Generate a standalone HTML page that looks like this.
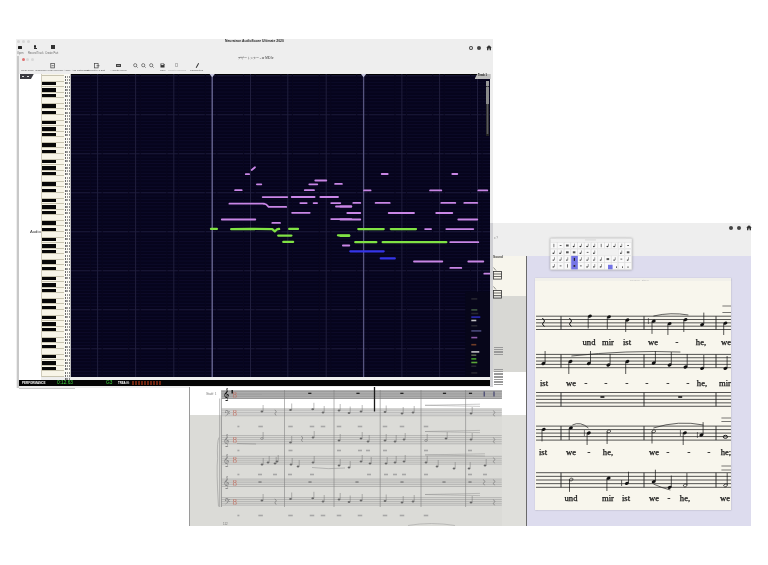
<!DOCTYPE html>
<html><head><meta charset="utf-8"><style>
html,body{margin:0;padding:0;background:#fff;width:768px;height:565px;overflow:hidden;position:relative;font-family:"Liberation Sans",sans-serif}
div,span,svg{position:absolute;box-sizing:border-box}
span{white-space:nowrap;line-height:1;will-change:transform}
</style></head><body>
<div style="left:16px;top:39px;width:476.8px;height:349px;background:#eeeeee;"></div>
<div style="left:17px;top:55.5px;width:1.8px;height:332px;background:#c8c8c8;"></div>
<div style="left:70.7px;top:73.5px;width:419.6px;height:303.3px;background:#06041c;"></div>
<div style="left:70.7px;top:73.5px;width:419.6px;height:1.2px;background:#000000;"></div>
<div style="left:19px;top:73.5px;width:22.2px;height:306px;background:#ffffff;"></div>
<div style="left:20px;top:73.6px;width:14px;height:5.3px;background:#3c3c42;clip-path:polygon(0 0,100% 0,78% 100%,0 100%)"></div>
<div style="left:22.3px;top:75.6px;width:1.6px;height:1.2px;background:#ddd;"></div>
<div style="left:27.3px;top:75.6px;width:1.6px;height:1.2px;background:#ddd;"></div>
<div style="left:41.2px;top:73.5px;width:22.8px;height:303.3px;background:#f8f5e8;"></div>
<div style="left:64px;top:73.5px;width:6.7px;height:303.3px;background:#fbfaf4;"></div>
<svg style="position:absolute;left:70.7px;top:73.5px" width="419.6" height="303.3" viewBox="0 0 419.6 303.3"><rect x="0" y="1.28" width="420" height="1" fill="#1e1c3e"/><rect x="0" y="4.63" width="420" height="0.8" fill="#0e0c2c"/><rect x="0" y="7.88" width="420" height="0.8" fill="#0e0c2c"/><rect x="0" y="11.13" width="420" height="0.8" fill="#0e0c2c"/><rect x="0" y="14.38" width="420" height="0.8" fill="#0e0c2c"/><rect x="0" y="17.63" width="420" height="0.8" fill="#0e0c2c"/><rect x="0" y="20.88" width="420" height="0.8" fill="#0e0c2c"/><rect x="0" y="24.13" width="420" height="0.8" fill="#0e0c2c"/><rect x="0" y="27.38" width="420" height="0.8" fill="#0e0c2c"/><rect x="0" y="30.63" width="420" height="0.8" fill="#0e0c2c"/><rect x="0" y="33.88" width="420" height="0.8" fill="#0e0c2c"/><rect x="0" y="37.13" width="420" height="0.8" fill="#0e0c2c"/><rect x="0" y="40.28" width="420" height="1" fill="#1e1c3e"/><rect x="0" y="43.63" width="420" height="0.8" fill="#0e0c2c"/><rect x="0" y="46.88" width="420" height="0.8" fill="#0e0c2c"/><rect x="0" y="50.13" width="420" height="0.8" fill="#0e0c2c"/><rect x="0" y="53.38" width="420" height="0.8" fill="#0e0c2c"/><rect x="0" y="56.63" width="420" height="0.8" fill="#0e0c2c"/><rect x="0" y="59.88" width="420" height="0.8" fill="#0e0c2c"/><rect x="0" y="63.13" width="420" height="0.8" fill="#0e0c2c"/><rect x="0" y="66.38" width="420" height="0.8" fill="#0e0c2c"/><rect x="0" y="69.62" width="420" height="0.8" fill="#0e0c2c"/><rect x="0" y="72.88" width="420" height="0.8" fill="#0e0c2c"/><rect x="0" y="76.12" width="420" height="0.8" fill="#0e0c2c"/><rect x="0" y="79.28" width="420" height="1" fill="#1e1c3e"/><rect x="0" y="82.62" width="420" height="0.8" fill="#0e0c2c"/><rect x="0" y="85.88" width="420" height="0.8" fill="#0e0c2c"/><rect x="0" y="89.12" width="420" height="0.8" fill="#0e0c2c"/><rect x="0" y="92.38" width="420" height="0.8" fill="#0e0c2c"/><rect x="0" y="95.62" width="420" height="0.8" fill="#0e0c2c"/><rect x="0" y="98.88" width="420" height="0.8" fill="#0e0c2c"/><rect x="0" y="102.12" width="420" height="0.8" fill="#0e0c2c"/><rect x="0" y="105.38" width="420" height="0.8" fill="#0e0c2c"/><rect x="0" y="108.62" width="420" height="0.8" fill="#0e0c2c"/><rect x="0" y="111.88" width="420" height="0.8" fill="#0e0c2c"/><rect x="0" y="115.12" width="420" height="0.8" fill="#0e0c2c"/><rect x="0" y="118.28" width="420" height="1" fill="#1e1c3e"/><rect x="0" y="121.62" width="420" height="0.8" fill="#0e0c2c"/><rect x="0" y="124.88" width="420" height="0.8" fill="#0e0c2c"/><rect x="0" y="128.12" width="420" height="0.8" fill="#0e0c2c"/><rect x="0" y="131.38" width="420" height="0.8" fill="#0e0c2c"/><rect x="0" y="134.62" width="420" height="0.8" fill="#0e0c2c"/><rect x="0" y="137.88" width="420" height="0.8" fill="#0e0c2c"/><rect x="0" y="141.12" width="420" height="0.8" fill="#0e0c2c"/><rect x="0" y="144.38" width="420" height="0.8" fill="#0e0c2c"/><rect x="0" y="147.62" width="420" height="0.8" fill="#0e0c2c"/><rect x="0" y="150.88" width="420" height="0.8" fill="#0e0c2c"/><rect x="0" y="154.12" width="420" height="0.8" fill="#0e0c2c"/><rect x="0" y="157.28" width="420" height="1" fill="#1e1c3e"/><rect x="0" y="160.62" width="420" height="0.8" fill="#0e0c2c"/><rect x="0" y="163.88" width="420" height="0.8" fill="#0e0c2c"/><rect x="0" y="167.12" width="420" height="0.8" fill="#0e0c2c"/><rect x="0" y="170.38" width="420" height="0.8" fill="#0e0c2c"/><rect x="0" y="173.62" width="420" height="0.8" fill="#0e0c2c"/><rect x="0" y="176.88" width="420" height="0.8" fill="#0e0c2c"/><rect x="0" y="180.12" width="420" height="0.8" fill="#0e0c2c"/><rect x="0" y="183.37" width="420" height="0.8" fill="#0e0c2c"/><rect x="0" y="186.62" width="420" height="0.8" fill="#0e0c2c"/><rect x="0" y="189.87" width="420" height="0.8" fill="#0e0c2c"/><rect x="0" y="193.12" width="420" height="0.8" fill="#0e0c2c"/><rect x="0" y="196.27" width="420" height="1" fill="#1e1c3e"/><rect x="0" y="199.62" width="420" height="0.8" fill="#0e0c2c"/><rect x="0" y="202.87" width="420" height="0.8" fill="#0e0c2c"/><rect x="0" y="206.12" width="420" height="0.8" fill="#0e0c2c"/><rect x="0" y="209.37" width="420" height="0.8" fill="#0e0c2c"/><rect x="0" y="212.62" width="420" height="0.8" fill="#0e0c2c"/><rect x="0" y="215.87" width="420" height="0.8" fill="#0e0c2c"/><rect x="0" y="219.12" width="420" height="0.8" fill="#0e0c2c"/><rect x="0" y="222.37" width="420" height="0.8" fill="#0e0c2c"/><rect x="0" y="225.62" width="420" height="0.8" fill="#0e0c2c"/><rect x="0" y="228.87" width="420" height="0.8" fill="#0e0c2c"/><rect x="0" y="232.12" width="420" height="0.8" fill="#0e0c2c"/><rect x="0" y="235.27" width="420" height="1" fill="#1e1c3e"/><rect x="0" y="238.62" width="420" height="0.8" fill="#0e0c2c"/><rect x="0" y="241.87" width="420" height="0.8" fill="#0e0c2c"/><rect x="0" y="245.12" width="420" height="0.8" fill="#0e0c2c"/><rect x="0" y="248.37" width="420" height="0.8" fill="#0e0c2c"/><rect x="0" y="251.62" width="420" height="0.8" fill="#0e0c2c"/><rect x="0" y="254.87" width="420" height="0.8" fill="#0e0c2c"/><rect x="0" y="258.12" width="420" height="0.8" fill="#0e0c2c"/><rect x="0" y="261.38" width="420" height="0.8" fill="#0e0c2c"/><rect x="0" y="264.62" width="420" height="0.8" fill="#0e0c2c"/><rect x="0" y="267.88" width="420" height="0.8" fill="#0e0c2c"/><rect x="0" y="271.12" width="420" height="0.8" fill="#0e0c2c"/><rect x="0" y="274.27" width="420" height="1" fill="#1e1c3e"/><rect x="0" y="277.62" width="420" height="0.8" fill="#0e0c2c"/><rect x="0" y="280.88" width="420" height="0.8" fill="#0e0c2c"/><rect x="0" y="284.12" width="420" height="0.8" fill="#0e0c2c"/><rect x="0" y="287.38" width="420" height="0.8" fill="#0e0c2c"/><rect x="0" y="290.62" width="420" height="0.8" fill="#0e0c2c"/><rect x="0" y="293.88" width="420" height="0.8" fill="#0e0c2c"/><rect x="0" y="297.12" width="420" height="0.8" fill="#0e0c2c"/><rect x="0" y="300.38" width="420" height="0.8" fill="#0e0c2c"/><rect x="26.1" y="0" width="1" height="303.3" fill="#201e3c"/><rect x="64.1" y="0" width="1" height="303.3" fill="#201e3c"/><rect x="102.3" y="0" width="1" height="303.3" fill="#201e3c"/><rect x="140.55" y="0" width="1.3" height="303.3" fill="#6e6c98"/><rect x="179" y="0" width="1" height="303.3" fill="#201e3c"/><rect x="216.3" y="0" width="1" height="303.3" fill="#201e3c"/><rect x="254.7" y="0" width="1" height="303.3" fill="#201e3c"/><rect x="291.95" y="0" width="1.3" height="303.3" fill="#56547e"/><rect x="330.4" y="0" width="1" height="303.3" fill="#201e3c"/><rect x="368.1" y="0" width="1" height="303.3" fill="#201e3c"/><rect x="406" y="0" width="1" height="303.3" fill="#201e3c"/><rect x="30.7" y="0" width="1" height="303.3" fill="#09071f"/><rect x="19.2" y="0" width="1" height="303.3" fill="#09071f"/><rect x="68.7" y="0" width="1" height="303.3" fill="#09071f"/><rect x="57.2" y="0" width="1" height="303.3" fill="#09071f"/><rect x="106.9" y="0" width="1" height="303.3" fill="#09071f"/><rect x="95.4" y="0" width="1" height="303.3" fill="#09071f"/><rect x="145.3" y="0" width="1" height="303.3" fill="#09071f"/><rect x="133.8" y="0" width="1" height="303.3" fill="#09071f"/><rect x="183.6" y="0" width="1" height="303.3" fill="#09071f"/><rect x="172.1" y="0" width="1" height="303.3" fill="#09071f"/><rect x="220.9" y="0" width="1" height="303.3" fill="#09071f"/><rect x="209.4" y="0" width="1" height="303.3" fill="#09071f"/><rect x="259.3" y="0" width="1" height="303.3" fill="#09071f"/><rect x="247.8" y="0" width="1" height="303.3" fill="#09071f"/><rect x="296.7" y="0" width="1" height="303.3" fill="#09071f"/><rect x="285.2" y="0" width="1" height="303.3" fill="#09071f"/><rect x="335" y="0" width="1" height="303.3" fill="#09071f"/><rect x="323.5" y="0" width="1" height="303.3" fill="#09071f"/><rect x="372.7" y="0" width="1" height="303.3" fill="#09071f"/><rect x="361.2" y="0" width="1" height="303.3" fill="#09071f"/><rect x="410.6" y="0" width="1" height="303.3" fill="#09071f"/><rect x="399.1" y="0" width="1" height="303.3" fill="#09071f"/><path d="M174.8,100.2 L178.1,100.2" stroke="#c986e6" stroke-width="1.8" fill="none" stroke-linecap="round" stroke-linejoin="round"/><path d="M164.1,116.2 L170.7,116.2" stroke="#c986e6" stroke-width="1.8" fill="none" stroke-linecap="round" stroke-linejoin="round"/><path d="M185.9,110.3 L190.3,110.3" stroke="#c986e6" stroke-width="1.8" fill="none" stroke-linecap="round" stroke-linejoin="round"/><path d="M158.4,129.7 L192.1,129.7" stroke="#c986e6" stroke-width="1.8" fill="none" stroke-linecap="round" stroke-linejoin="round"/><path d="M191.7,123.1 L216.3,123.1" stroke="#c986e6" stroke-width="1.8" fill="none" stroke-linecap="round" stroke-linejoin="round"/><path d="M220.7,123 L243.6,123" stroke="#c986e6" stroke-width="1.8" fill="none" stroke-linecap="round" stroke-linejoin="round"/><path d="M249.3,123 L267,123" stroke="#c986e6" stroke-width="1.8" fill="none" stroke-linecap="round" stroke-linejoin="round"/><path d="M244.3,106.5 L255.3,106.5" stroke="#c986e6" stroke-width="1.8" fill="none" stroke-linecap="round" stroke-linejoin="round"/><path d="M238.3,110.3 L246.3,110.3" stroke="#c986e6" stroke-width="1.8" fill="none" stroke-linecap="round" stroke-linejoin="round"/><path d="M233.8,116.2 L243,116.2" stroke="#c986e6" stroke-width="1.8" fill="none" stroke-linecap="round" stroke-linejoin="round"/><path d="M229.3,129.1 L235.7,129.1" stroke="#c986e6" stroke-width="1.8" fill="none" stroke-linecap="round" stroke-linejoin="round"/><path d="M242.6,129.1 L246.1,129.1" stroke="#c986e6" stroke-width="1.8" fill="none" stroke-linecap="round" stroke-linejoin="round"/><path d="M264.1,109.9 L270.9,109.9" stroke="#c986e6" stroke-width="1.8" fill="none" stroke-linecap="round" stroke-linejoin="round"/><path d="M260.2,129.1 L269.3,129.1" stroke="#c986e6" stroke-width="1.8" fill="none" stroke-linecap="round" stroke-linejoin="round"/><path d="M265,132.5 L280.3,132.5" stroke="#c986e6" stroke-width="1.8" fill="none" stroke-linecap="round" stroke-linejoin="round"/><path d="M221.1,138.8 L238.7,138.8" stroke="#c986e6" stroke-width="1.8" fill="none" stroke-linecap="round" stroke-linejoin="round"/><path d="M150.8,145.5 L184.3,145.5" stroke="#c986e6" stroke-width="1.8" fill="none" stroke-linecap="round" stroke-linejoin="round"/><path d="M260.2,145.1 L280.3,145.1" stroke="#c986e6" stroke-width="1.8" fill="none" stroke-linecap="round" stroke-linejoin="round"/><path d="M201.3,148.9 L209,148.9" stroke="#c986e6" stroke-width="1.8" fill="none" stroke-linecap="round" stroke-linejoin="round"/><path d="M271.9,171.5 L278.3,171.5" stroke="#c986e6" stroke-width="1.8" fill="none" stroke-linecap="round" stroke-linejoin="round"/><path d="M310.7,100 L316.7,100" stroke="#c986e6" stroke-width="1.8" fill="none" stroke-linecap="round" stroke-linejoin="round"/><path d="M381.3,100 L386.3,100" stroke="#c986e6" stroke-width="1.8" fill="none" stroke-linecap="round" stroke-linejoin="round"/><path d="M293.1,116.4 L299.6,116.4" stroke="#c986e6" stroke-width="1.8" fill="none" stroke-linecap="round" stroke-linejoin="round"/><path d="M359.1,116.4 L370.3,116.4" stroke="#c986e6" stroke-width="1.8" fill="none" stroke-linecap="round" stroke-linejoin="round"/><path d="M407.3,116.4 L416.3,116.4" stroke="#c986e6" stroke-width="1.8" fill="none" stroke-linecap="round" stroke-linejoin="round"/><path d="M282.3,128.9 L289.3,128.9" stroke="#c986e6" stroke-width="1.8" fill="none" stroke-linecap="round" stroke-linejoin="round"/><path d="M304.6,128.9 L318.7,128.9" stroke="#c986e6" stroke-width="1.8" fill="none" stroke-linecap="round" stroke-linejoin="round"/><path d="M370.3,128.9 L384.3,128.9" stroke="#c986e6" stroke-width="1.8" fill="none" stroke-linecap="round" stroke-linejoin="round"/><path d="M393.3,128.9 L406.3,128.9" stroke="#c986e6" stroke-width="1.8" fill="none" stroke-linecap="round" stroke-linejoin="round"/><path d="M269.3,132.5 L280.3,132.5" stroke="#c986e6" stroke-width="1.8" fill="none" stroke-linecap="round" stroke-linejoin="round"/><path d="M276.3,139 L289.3,139" stroke="#c986e6" stroke-width="1.8" fill="none" stroke-linecap="round" stroke-linejoin="round"/><path d="M317.7,139 L343,139" stroke="#c986e6" stroke-width="1.8" fill="none" stroke-linecap="round" stroke-linejoin="round"/><path d="M365.2,139 L381.3,139" stroke="#c986e6" stroke-width="1.8" fill="none" stroke-linecap="round" stroke-linejoin="round"/><path d="M269.3,145.5 L289.3,145.5" stroke="#c986e6" stroke-width="1.8" fill="none" stroke-linecap="round" stroke-linejoin="round"/><path d="M387.3,145.5 L406.3,145.5" stroke="#c986e6" stroke-width="1.8" fill="none" stroke-linecap="round" stroke-linejoin="round"/><path d="M375.3,155.1 L402.3,155.1" stroke="#c986e6" stroke-width="1.8" fill="none" stroke-linecap="round" stroke-linejoin="round"/><path d="M354.1,155.1 L360.1,155.1" stroke="#c986e6" stroke-width="1.8" fill="none" stroke-linecap="round" stroke-linejoin="round"/><path d="M379.3,168.2 L407.3,168.2" stroke="#c986e6" stroke-width="1.8" fill="none" stroke-linecap="round" stroke-linejoin="round"/><path d="M343,187.5 L371.3,187.5" stroke="#c986e6" stroke-width="1.8" fill="none" stroke-linecap="round" stroke-linejoin="round"/><path d="M397.3,187.5 L412.3,187.5" stroke="#c986e6" stroke-width="1.8" fill="none" stroke-linecap="round" stroke-linejoin="round"/><path d="M379.3,193.9 L390.3,193.9" stroke="#c986e6" stroke-width="1.8" fill="none" stroke-linecap="round" stroke-linejoin="round"/><path d="M413.3,199.7 L419.8,199.7" stroke="#c986e6" stroke-width="1.8" fill="none" stroke-linecap="round" stroke-linejoin="round"/><path d="M180.7,96 L184,93.3" stroke="#c986e6" stroke-width="1.8" fill="none" stroke-linecap="round" stroke-linejoin="round"/><path d="M192.8,129.7 L195.3,130.5 L197.6,132.9 L215.2,132.9" stroke="#c986e6" stroke-width="1.8" fill="none" stroke-linecap="round" stroke-linejoin="round"/><path d="M140,154.9 L145.9,154.9" stroke="#80e244" stroke-width="2.3" fill="none" stroke-linecap="round" stroke-linejoin="round"/><path d="M218.2,154.9 L227,154.9" stroke="#80e244" stroke-width="2.3" fill="none" stroke-linecap="round" stroke-linejoin="round"/><path d="M207.2,161.6 L220.4,161.6" stroke="#80e244" stroke-width="2.3" fill="none" stroke-linecap="round" stroke-linejoin="round"/><path d="M212.3,167.9 L222.1,167.9" stroke="#80e244" stroke-width="2.3" fill="none" stroke-linecap="round" stroke-linejoin="round"/><path d="M267,161.3 L278.1,161.3" stroke="#80e244" stroke-width="2.3" fill="none" stroke-linecap="round" stroke-linejoin="round"/><path d="M287.3,155.1 L312.7,155.1" stroke="#80e244" stroke-width="2.3" fill="none" stroke-linecap="round" stroke-linejoin="round"/><path d="M319.8,155.1 L345,155.1" stroke="#80e244" stroke-width="2.3" fill="none" stroke-linecap="round" stroke-linejoin="round"/><path d="M269.3,161.8 L278.3,161.8" stroke="#80e244" stroke-width="2.3" fill="none" stroke-linecap="round" stroke-linejoin="round"/><path d="M284.3,168.2 L305.3,168.2" stroke="#80e244" stroke-width="2.3" fill="none" stroke-linecap="round" stroke-linejoin="round"/><path d="M311.7,168.2 L375.3,168.2" stroke="#80e244" stroke-width="2.3" fill="none" stroke-linecap="round" stroke-linejoin="round"/><path d="M160.2,155.2 L179.3,154.9 L201.3,155.2 L203.8,157.3 L205.8,155.5 L208.1,155" stroke="#80e244" stroke-width="2.3" fill="none" stroke-linecap="round" stroke-linejoin="round"/><path d="M279.3,177.3 L312.7,177.3" stroke="#3535e8" stroke-width="2.2" fill="none" stroke-linecap="round" stroke-linejoin="round"/><path d="M309.7,184.4 L323.8,184.4" stroke="#3535e8" stroke-width="2.2" fill="none" stroke-linecap="round" stroke-linejoin="round"/><rect x="394.3" y="217.5" width="25.5" height="86" fill="#07061a"/><rect x="400.3" y="224.1" width="6" height="1.6" fill="#2e2e36" opacity="0.8"/><rect x="400.3" y="235.1" width="6" height="1.6" fill="#4a6a4a" opacity="0.8"/><rect x="400.3" y="238.7" width="7" height="1.6" fill="#2e2e36" opacity="0.8"/><rect x="400.3" y="242.3" width="9" height="1.6" fill="#3434d8" opacity="0.8"/><rect x="400.3" y="245.7" width="5" height="1.6" fill="#f0f0f0" opacity="0.8"/><rect x="400.3" y="251" width="6" height="1.6" fill="#2e2e36" opacity="0.8"/><rect x="400.3" y="256.1" width="10" height="1.6" fill="#5a5a94" opacity="0.8"/><rect x="400.3" y="262.8" width="6" height="1.6" fill="#b070d0" opacity="0.8"/><rect x="400.3" y="269.9" width="5" height="1.6" fill="#8a4a2a" opacity="0.8"/><rect x="400.3" y="277.1" width="8" height="1.6" fill="#f0f0f0" opacity="0.8"/><rect x="400.3" y="280.4" width="5" height="1.6" fill="#6a7a5a" opacity="0.8"/><rect x="400.3" y="284.1" width="5" height="1.6" fill="#50c030" opacity="0.8"/><rect x="400.3" y="287.7" width="6" height="1.6" fill="#70d040" opacity="0.8"/><rect x="400.3" y="291.4" width="5" height="1.6" fill="#2e2e36" opacity="0.8"/><rect x="400.3" y="298.1" width="6" height="1.6" fill="#2e2e36" opacity="0.8"/><path d="M138.6,0 L143.8,0 L141.2,3.2 Z" fill="#c8c8e0"/><path d="M290,0 L295.2,0 L292.6,3.2 Z" fill="#c8c8e0"/></svg>
<div style="left:41.2px;top:81.45px;width:15px;height:3.9px;background:#080808;"></div>
<div style="left:41.2px;top:87.95px;width:15px;height:3.9px;background:#080808;"></div>
<div style="left:41.2px;top:94.45px;width:15px;height:3.9px;background:#080808;"></div>
<div style="left:41.2px;top:104.2px;width:15px;height:3.9px;background:#080808;"></div>
<div style="left:41.2px;top:110.7px;width:15px;height:3.9px;background:#080808;"></div>
<div style="left:41.2px;top:120.45px;width:15px;height:3.9px;background:#080808;"></div>
<div style="left:41.2px;top:126.95px;width:15px;height:3.9px;background:#080808;"></div>
<div style="left:41.2px;top:133.45px;width:15px;height:3.9px;background:#080808;"></div>
<div style="left:41.2px;top:143.2px;width:15px;height:3.9px;background:#080808;"></div>
<div style="left:41.2px;top:149.7px;width:15px;height:3.9px;background:#080808;"></div>
<div style="left:41.2px;top:159.45px;width:15px;height:3.9px;background:#080808;"></div>
<div style="left:41.2px;top:165.95px;width:15px;height:3.9px;background:#080808;"></div>
<div style="left:41.2px;top:172.45px;width:15px;height:3.9px;background:#080808;"></div>
<div style="left:41.2px;top:182.2px;width:15px;height:3.9px;background:#080808;"></div>
<div style="left:41.2px;top:188.7px;width:15px;height:3.9px;background:#080808;"></div>
<div style="left:41.2px;top:198.45px;width:15px;height:3.9px;background:#080808;"></div>
<div style="left:41.2px;top:204.95px;width:15px;height:3.9px;background:#080808;"></div>
<div style="left:41.2px;top:211.45px;width:15px;height:3.9px;background:#080808;"></div>
<div style="left:41.2px;top:221.2px;width:15px;height:3.9px;background:#080808;"></div>
<div style="left:41.2px;top:227.7px;width:15px;height:3.9px;background:#080808;"></div>
<div style="left:41.2px;top:237.45px;width:15px;height:3.9px;background:#080808;"></div>
<div style="left:41.2px;top:243.95px;width:15px;height:3.9px;background:#080808;"></div>
<div style="left:41.2px;top:250.45px;width:15px;height:3.9px;background:#080808;"></div>
<div style="left:41.2px;top:260.2px;width:15px;height:3.9px;background:#080808;"></div>
<div style="left:41.2px;top:266.7px;width:15px;height:3.9px;background:#080808;"></div>
<div style="left:41.2px;top:276.45px;width:15px;height:3.9px;background:#080808;"></div>
<div style="left:41.2px;top:282.95px;width:15px;height:3.9px;background:#080808;"></div>
<div style="left:41.2px;top:289.45px;width:15px;height:3.9px;background:#080808;"></div>
<div style="left:41.2px;top:299.2px;width:15px;height:3.9px;background:#080808;"></div>
<div style="left:41.2px;top:305.7px;width:15px;height:3.9px;background:#080808;"></div>
<div style="left:41.2px;top:315.45px;width:15px;height:3.9px;background:#080808;"></div>
<div style="left:41.2px;top:321.95px;width:15px;height:3.9px;background:#080808;"></div>
<div style="left:41.2px;top:328.45px;width:15px;height:3.9px;background:#080808;"></div>
<div style="left:41.2px;top:338.2px;width:15px;height:3.9px;background:#080808;"></div>
<div style="left:41.2px;top:344.7px;width:15px;height:3.9px;background:#080808;"></div>
<div style="left:41.2px;top:354.45px;width:15px;height:3.9px;background:#080808;"></div>
<div style="left:41.2px;top:360.95px;width:15px;height:3.9px;background:#080808;"></div>
<div style="left:41.2px;top:367.45px;width:15px;height:3.9px;background:#080808;"></div>
<div style="left:41.2px;top:74.98px;width:22.8px;height:0.6px;background:#c8c4b0;"></div>
<div style="left:41.2px;top:80.55px;width:22.8px;height:0.6px;background:#c8c4b0;"></div>
<div style="left:41.2px;top:86.12px;width:22.8px;height:0.6px;background:#c8c4b0;"></div>
<div style="left:41.2px;top:91.69px;width:22.8px;height:0.6px;background:#c8c4b0;"></div>
<div style="left:41.2px;top:97.26px;width:22.8px;height:0.6px;background:#c8c4b0;"></div>
<div style="left:41.2px;top:102.83px;width:22.8px;height:0.6px;background:#c8c4b0;"></div>
<div style="left:41.2px;top:108.4px;width:22.8px;height:0.6px;background:#c8c4b0;"></div>
<div style="left:41.2px;top:113.98px;width:22.8px;height:0.6px;background:#c8c4b0;"></div>
<div style="left:41.2px;top:119.55px;width:22.8px;height:0.6px;background:#c8c4b0;"></div>
<div style="left:41.2px;top:125.12px;width:22.8px;height:0.6px;background:#c8c4b0;"></div>
<div style="left:41.2px;top:130.69px;width:22.8px;height:0.6px;background:#c8c4b0;"></div>
<div style="left:41.2px;top:136.26px;width:22.8px;height:0.6px;background:#c8c4b0;"></div>
<div style="left:41.2px;top:141.83px;width:22.8px;height:0.6px;background:#c8c4b0;"></div>
<div style="left:41.2px;top:147.4px;width:22.8px;height:0.6px;background:#c8c4b0;"></div>
<div style="left:41.2px;top:152.97px;width:22.8px;height:0.6px;background:#c8c4b0;"></div>
<div style="left:41.2px;top:158.55px;width:22.8px;height:0.6px;background:#c8c4b0;"></div>
<div style="left:41.2px;top:164.12px;width:22.8px;height:0.6px;background:#c8c4b0;"></div>
<div style="left:41.2px;top:169.69px;width:22.8px;height:0.6px;background:#c8c4b0;"></div>
<div style="left:41.2px;top:175.26px;width:22.8px;height:0.6px;background:#c8c4b0;"></div>
<div style="left:41.2px;top:180.83px;width:22.8px;height:0.6px;background:#c8c4b0;"></div>
<div style="left:41.2px;top:186.4px;width:22.8px;height:0.6px;background:#c8c4b0;"></div>
<div style="left:41.2px;top:191.97px;width:22.8px;height:0.6px;background:#c8c4b0;"></div>
<div style="left:41.2px;top:197.55px;width:22.8px;height:0.6px;background:#c8c4b0;"></div>
<div style="left:41.2px;top:203.12px;width:22.8px;height:0.6px;background:#c8c4b0;"></div>
<div style="left:41.2px;top:208.69px;width:22.8px;height:0.6px;background:#c8c4b0;"></div>
<div style="left:41.2px;top:214.26px;width:22.8px;height:0.6px;background:#c8c4b0;"></div>
<div style="left:41.2px;top:219.83px;width:22.8px;height:0.6px;background:#c8c4b0;"></div>
<div style="left:41.2px;top:225.4px;width:22.8px;height:0.6px;background:#c8c4b0;"></div>
<div style="left:41.2px;top:230.97px;width:22.8px;height:0.6px;background:#c8c4b0;"></div>
<div style="left:41.2px;top:236.55px;width:22.8px;height:0.6px;background:#c8c4b0;"></div>
<div style="left:41.2px;top:242.12px;width:22.8px;height:0.6px;background:#c8c4b0;"></div>
<div style="left:41.2px;top:247.69px;width:22.8px;height:0.6px;background:#c8c4b0;"></div>
<div style="left:41.2px;top:253.26px;width:22.8px;height:0.6px;background:#c8c4b0;"></div>
<div style="left:41.2px;top:258.83px;width:22.8px;height:0.6px;background:#c8c4b0;"></div>
<div style="left:41.2px;top:264.4px;width:22.8px;height:0.6px;background:#c8c4b0;"></div>
<div style="left:41.2px;top:269.97px;width:22.8px;height:0.6px;background:#c8c4b0;"></div>
<div style="left:41.2px;top:275.55px;width:22.8px;height:0.6px;background:#c8c4b0;"></div>
<div style="left:41.2px;top:281.12px;width:22.8px;height:0.6px;background:#c8c4b0;"></div>
<div style="left:41.2px;top:286.69px;width:22.8px;height:0.6px;background:#c8c4b0;"></div>
<div style="left:41.2px;top:292.26px;width:22.8px;height:0.6px;background:#c8c4b0;"></div>
<div style="left:41.2px;top:297.83px;width:22.8px;height:0.6px;background:#c8c4b0;"></div>
<div style="left:41.2px;top:303.4px;width:22.8px;height:0.6px;background:#c8c4b0;"></div>
<div style="left:41.2px;top:308.97px;width:22.8px;height:0.6px;background:#c8c4b0;"></div>
<div style="left:41.2px;top:314.55px;width:22.8px;height:0.6px;background:#c8c4b0;"></div>
<div style="left:41.2px;top:320.12px;width:22.8px;height:0.6px;background:#c8c4b0;"></div>
<div style="left:41.2px;top:325.69px;width:22.8px;height:0.6px;background:#c8c4b0;"></div>
<div style="left:41.2px;top:331.26px;width:22.8px;height:0.6px;background:#c8c4b0;"></div>
<div style="left:41.2px;top:336.83px;width:22.8px;height:0.6px;background:#c8c4b0;"></div>
<div style="left:41.2px;top:342.4px;width:22.8px;height:0.6px;background:#c8c4b0;"></div>
<div style="left:41.2px;top:347.97px;width:22.8px;height:0.6px;background:#c8c4b0;"></div>
<div style="left:41.2px;top:353.55px;width:22.8px;height:0.6px;background:#c8c4b0;"></div>
<div style="left:41.2px;top:359.12px;width:22.8px;height:0.6px;background:#c8c4b0;"></div>
<div style="left:41.2px;top:364.69px;width:22.8px;height:0.6px;background:#c8c4b0;"></div>
<div style="left:41.2px;top:370.26px;width:22.8px;height:0.6px;background:#c8c4b0;"></div>
<div style="left:41.2px;top:375.83px;width:22.8px;height:0.6px;background:#c8c4b0;"></div>
<div style="left:41.2px;top:73.5px;width:0.6px;height:303.3px;background:#d0ccbc;"></div>
<div style="left:64.5px;top:75.9px;width:1.8px;height:2px;background:#6a6a6a;"></div>
<div style="left:66.6px;top:75.9px;width:1.2px;height:2px;background:#9a9a9a;"></div>
<div style="left:68.6px;top:75.9px;width:1.4px;height:2px;background:#8a8a8a;"></div>
<div style="left:64.5px;top:79.15px;width:1.8px;height:2px;background:#6a6a6a;"></div>
<div style="left:66.6px;top:79.15px;width:1.2px;height:2px;background:#9a9a9a;"></div>
<div style="left:68.6px;top:79.15px;width:1.4px;height:2px;background:#8a8a8a;"></div>
<div style="left:64.5px;top:82.4px;width:1.8px;height:2px;background:#6a6a6a;"></div>
<div style="left:66.3px;top:82.4px;width:1.9px;height:2px;background:#9a9a9a;"></div>
<div style="left:68.6px;top:82.4px;width:1.4px;height:2px;background:#8a8a8a;"></div>
<div style="left:64.5px;top:85.65px;width:1.8px;height:2px;background:#6a6a6a;"></div>
<div style="left:66.6px;top:85.65px;width:1.2px;height:2px;background:#9a9a9a;"></div>
<div style="left:68.6px;top:85.65px;width:1.4px;height:2px;background:#8a8a8a;"></div>
<div style="left:64.5px;top:88.9px;width:1.8px;height:2px;background:#6a6a6a;"></div>
<div style="left:66.3px;top:88.9px;width:1.9px;height:2px;background:#9a9a9a;"></div>
<div style="left:68.6px;top:88.9px;width:1.4px;height:2px;background:#8a8a8a;"></div>
<div style="left:64.5px;top:92.15px;width:1.8px;height:2px;background:#6a6a6a;"></div>
<div style="left:66.6px;top:92.15px;width:1.2px;height:2px;background:#9a9a9a;"></div>
<div style="left:68.6px;top:92.15px;width:1.4px;height:2px;background:#8a8a8a;"></div>
<div style="left:64.5px;top:95.4px;width:1.8px;height:2px;background:#6a6a6a;"></div>
<div style="left:66.3px;top:95.4px;width:1.9px;height:2px;background:#9a9a9a;"></div>
<div style="left:68.6px;top:95.4px;width:1.4px;height:2px;background:#8a8a8a;"></div>
<div style="left:64.5px;top:98.65px;width:1.8px;height:2px;background:#6a6a6a;"></div>
<div style="left:66.6px;top:98.65px;width:1.2px;height:2px;background:#9a9a9a;"></div>
<div style="left:68.6px;top:98.65px;width:1.4px;height:2px;background:#8a8a8a;"></div>
<div style="left:64.5px;top:101.9px;width:1.8px;height:2px;background:#6a6a6a;"></div>
<div style="left:66.6px;top:101.9px;width:1.2px;height:2px;background:#9a9a9a;"></div>
<div style="left:68.6px;top:101.9px;width:1.4px;height:2px;background:#8a8a8a;"></div>
<div style="left:64.5px;top:105.15px;width:1.8px;height:2px;background:#6a6a6a;"></div>
<div style="left:66.3px;top:105.15px;width:1.9px;height:2px;background:#9a9a9a;"></div>
<div style="left:68.6px;top:105.15px;width:1.4px;height:2px;background:#8a8a8a;"></div>
<div style="left:64.5px;top:108.4px;width:1.8px;height:2px;background:#6a6a6a;"></div>
<div style="left:66.6px;top:108.4px;width:1.2px;height:2px;background:#9a9a9a;"></div>
<div style="left:68.6px;top:108.4px;width:1.4px;height:2px;background:#8a8a8a;"></div>
<div style="left:64.5px;top:111.65px;width:1.8px;height:2px;background:#6a6a6a;"></div>
<div style="left:66.3px;top:111.65px;width:1.9px;height:2px;background:#9a9a9a;"></div>
<div style="left:68.6px;top:111.65px;width:1.4px;height:2px;background:#8a8a8a;"></div>
<div style="left:64.5px;top:114.9px;width:1.8px;height:2px;background:#6a6a6a;"></div>
<div style="left:66.6px;top:114.9px;width:1.2px;height:2px;background:#9a9a9a;"></div>
<div style="left:68.6px;top:114.9px;width:1.4px;height:2px;background:#8a8a8a;"></div>
<div style="left:64.5px;top:118.15px;width:1.8px;height:2px;background:#6a6a6a;"></div>
<div style="left:66.6px;top:118.15px;width:1.2px;height:2px;background:#9a9a9a;"></div>
<div style="left:68.6px;top:118.15px;width:1.4px;height:2px;background:#8a8a8a;"></div>
<div style="left:64.5px;top:121.4px;width:1.8px;height:2px;background:#6a6a6a;"></div>
<div style="left:66.3px;top:121.4px;width:1.9px;height:2px;background:#9a9a9a;"></div>
<div style="left:68.6px;top:121.4px;width:1.4px;height:2px;background:#8a8a8a;"></div>
<div style="left:64.5px;top:124.65px;width:1.8px;height:2px;background:#6a6a6a;"></div>
<div style="left:66.6px;top:124.65px;width:1.2px;height:2px;background:#9a9a9a;"></div>
<div style="left:68.6px;top:124.65px;width:1.4px;height:2px;background:#8a8a8a;"></div>
<div style="left:64.5px;top:127.9px;width:1.8px;height:2px;background:#6a6a6a;"></div>
<div style="left:66.3px;top:127.9px;width:1.9px;height:2px;background:#9a9a9a;"></div>
<div style="left:68.6px;top:127.9px;width:1.4px;height:2px;background:#8a8a8a;"></div>
<div style="left:64.5px;top:131.15px;width:1.8px;height:2px;background:#6a6a6a;"></div>
<div style="left:66.6px;top:131.15px;width:1.2px;height:2px;background:#9a9a9a;"></div>
<div style="left:68.6px;top:131.15px;width:1.4px;height:2px;background:#8a8a8a;"></div>
<div style="left:64.5px;top:134.4px;width:1.8px;height:2px;background:#6a6a6a;"></div>
<div style="left:66.3px;top:134.4px;width:1.9px;height:2px;background:#9a9a9a;"></div>
<div style="left:68.6px;top:134.4px;width:1.4px;height:2px;background:#8a8a8a;"></div>
<div style="left:64.5px;top:137.65px;width:1.8px;height:2px;background:#6a6a6a;"></div>
<div style="left:66.6px;top:137.65px;width:1.2px;height:2px;background:#9a9a9a;"></div>
<div style="left:68.6px;top:137.65px;width:1.4px;height:2px;background:#8a8a8a;"></div>
<div style="left:64.5px;top:140.9px;width:1.8px;height:2px;background:#6a6a6a;"></div>
<div style="left:66.6px;top:140.9px;width:1.2px;height:2px;background:#9a9a9a;"></div>
<div style="left:68.6px;top:140.9px;width:1.4px;height:2px;background:#8a8a8a;"></div>
<div style="left:64.5px;top:144.15px;width:1.8px;height:2px;background:#6a6a6a;"></div>
<div style="left:66.3px;top:144.15px;width:1.9px;height:2px;background:#9a9a9a;"></div>
<div style="left:68.6px;top:144.15px;width:1.4px;height:2px;background:#8a8a8a;"></div>
<div style="left:64.5px;top:147.4px;width:1.8px;height:2px;background:#6a6a6a;"></div>
<div style="left:66.6px;top:147.4px;width:1.2px;height:2px;background:#9a9a9a;"></div>
<div style="left:68.6px;top:147.4px;width:1.4px;height:2px;background:#8a8a8a;"></div>
<div style="left:64.5px;top:150.65px;width:1.8px;height:2px;background:#6a6a6a;"></div>
<div style="left:66.3px;top:150.65px;width:1.9px;height:2px;background:#9a9a9a;"></div>
<div style="left:68.6px;top:150.65px;width:1.4px;height:2px;background:#8a8a8a;"></div>
<div style="left:64.5px;top:153.9px;width:1.8px;height:2px;background:#6a6a6a;"></div>
<div style="left:66.6px;top:153.9px;width:1.2px;height:2px;background:#9a9a9a;"></div>
<div style="left:68.6px;top:153.9px;width:1.4px;height:2px;background:#8a8a8a;"></div>
<div style="left:64.5px;top:157.15px;width:1.8px;height:2px;background:#6a6a6a;"></div>
<div style="left:66.6px;top:157.15px;width:1.2px;height:2px;background:#9a9a9a;"></div>
<div style="left:68.6px;top:157.15px;width:1.4px;height:2px;background:#8a8a8a;"></div>
<div style="left:64.5px;top:160.4px;width:1.8px;height:2px;background:#6a6a6a;"></div>
<div style="left:66.3px;top:160.4px;width:1.9px;height:2px;background:#9a9a9a;"></div>
<div style="left:68.6px;top:160.4px;width:1.4px;height:2px;background:#8a8a8a;"></div>
<div style="left:64.5px;top:163.65px;width:1.8px;height:2px;background:#6a6a6a;"></div>
<div style="left:66.6px;top:163.65px;width:1.2px;height:2px;background:#9a9a9a;"></div>
<div style="left:68.6px;top:163.65px;width:1.4px;height:2px;background:#8a8a8a;"></div>
<div style="left:64.5px;top:166.9px;width:1.8px;height:2px;background:#6a6a6a;"></div>
<div style="left:66.3px;top:166.9px;width:1.9px;height:2px;background:#9a9a9a;"></div>
<div style="left:68.6px;top:166.9px;width:1.4px;height:2px;background:#8a8a8a;"></div>
<div style="left:64.5px;top:170.15px;width:1.8px;height:2px;background:#6a6a6a;"></div>
<div style="left:66.6px;top:170.15px;width:1.2px;height:2px;background:#9a9a9a;"></div>
<div style="left:68.6px;top:170.15px;width:1.4px;height:2px;background:#8a8a8a;"></div>
<div style="left:64.5px;top:173.4px;width:1.8px;height:2px;background:#6a6a6a;"></div>
<div style="left:66.3px;top:173.4px;width:1.9px;height:2px;background:#9a9a9a;"></div>
<div style="left:68.6px;top:173.4px;width:1.4px;height:2px;background:#8a8a8a;"></div>
<div style="left:64.5px;top:176.65px;width:1.8px;height:2px;background:#6a6a6a;"></div>
<div style="left:66.6px;top:176.65px;width:1.2px;height:2px;background:#9a9a9a;"></div>
<div style="left:68.6px;top:176.65px;width:1.4px;height:2px;background:#8a8a8a;"></div>
<div style="left:64.5px;top:179.9px;width:1.8px;height:2px;background:#6a6a6a;"></div>
<div style="left:66.6px;top:179.9px;width:1.2px;height:2px;background:#9a9a9a;"></div>
<div style="left:68.6px;top:179.9px;width:1.4px;height:2px;background:#8a8a8a;"></div>
<div style="left:64.5px;top:183.15px;width:1.8px;height:2px;background:#6a6a6a;"></div>
<div style="left:66.3px;top:183.15px;width:1.9px;height:2px;background:#9a9a9a;"></div>
<div style="left:68.6px;top:183.15px;width:1.4px;height:2px;background:#8a8a8a;"></div>
<div style="left:64.5px;top:186.4px;width:1.8px;height:2px;background:#6a6a6a;"></div>
<div style="left:66.6px;top:186.4px;width:1.2px;height:2px;background:#9a9a9a;"></div>
<div style="left:68.6px;top:186.4px;width:1.4px;height:2px;background:#8a8a8a;"></div>
<div style="left:64.5px;top:189.65px;width:1.8px;height:2px;background:#6a6a6a;"></div>
<div style="left:66.3px;top:189.65px;width:1.9px;height:2px;background:#9a9a9a;"></div>
<div style="left:68.6px;top:189.65px;width:1.4px;height:2px;background:#8a8a8a;"></div>
<div style="left:64.5px;top:192.9px;width:1.8px;height:2px;background:#6a6a6a;"></div>
<div style="left:66.6px;top:192.9px;width:1.2px;height:2px;background:#9a9a9a;"></div>
<div style="left:68.6px;top:192.9px;width:1.4px;height:2px;background:#8a8a8a;"></div>
<div style="left:64.5px;top:196.15px;width:1.8px;height:2px;background:#6a6a6a;"></div>
<div style="left:66.6px;top:196.15px;width:1.2px;height:2px;background:#9a9a9a;"></div>
<div style="left:68.6px;top:196.15px;width:1.4px;height:2px;background:#8a8a8a;"></div>
<div style="left:64.5px;top:199.4px;width:1.8px;height:2px;background:#6a6a6a;"></div>
<div style="left:66.3px;top:199.4px;width:1.9px;height:2px;background:#9a9a9a;"></div>
<div style="left:68.6px;top:199.4px;width:1.4px;height:2px;background:#8a8a8a;"></div>
<div style="left:64.5px;top:202.65px;width:1.8px;height:2px;background:#6a6a6a;"></div>
<div style="left:66.6px;top:202.65px;width:1.2px;height:2px;background:#9a9a9a;"></div>
<div style="left:68.6px;top:202.65px;width:1.4px;height:2px;background:#8a8a8a;"></div>
<div style="left:64.5px;top:205.9px;width:1.8px;height:2px;background:#6a6a6a;"></div>
<div style="left:66.3px;top:205.9px;width:1.9px;height:2px;background:#9a9a9a;"></div>
<div style="left:68.6px;top:205.9px;width:1.4px;height:2px;background:#8a8a8a;"></div>
<div style="left:64.5px;top:209.15px;width:1.8px;height:2px;background:#6a6a6a;"></div>
<div style="left:66.6px;top:209.15px;width:1.2px;height:2px;background:#9a9a9a;"></div>
<div style="left:68.6px;top:209.15px;width:1.4px;height:2px;background:#8a8a8a;"></div>
<div style="left:64.5px;top:212.4px;width:1.8px;height:2px;background:#6a6a6a;"></div>
<div style="left:66.3px;top:212.4px;width:1.9px;height:2px;background:#9a9a9a;"></div>
<div style="left:68.6px;top:212.4px;width:1.4px;height:2px;background:#8a8a8a;"></div>
<div style="left:64.5px;top:215.65px;width:1.8px;height:2px;background:#6a6a6a;"></div>
<div style="left:66.6px;top:215.65px;width:1.2px;height:2px;background:#9a9a9a;"></div>
<div style="left:68.6px;top:215.65px;width:1.4px;height:2px;background:#8a8a8a;"></div>
<div style="left:64.5px;top:218.9px;width:1.8px;height:2px;background:#6a6a6a;"></div>
<div style="left:66.6px;top:218.9px;width:1.2px;height:2px;background:#9a9a9a;"></div>
<div style="left:68.6px;top:218.9px;width:1.4px;height:2px;background:#8a8a8a;"></div>
<div style="left:64.5px;top:222.15px;width:1.8px;height:2px;background:#6a6a6a;"></div>
<div style="left:66.3px;top:222.15px;width:1.9px;height:2px;background:#9a9a9a;"></div>
<div style="left:68.6px;top:222.15px;width:1.4px;height:2px;background:#8a8a8a;"></div>
<div style="left:64.5px;top:225.4px;width:1.8px;height:2px;background:#6a6a6a;"></div>
<div style="left:66.6px;top:225.4px;width:1.2px;height:2px;background:#9a9a9a;"></div>
<div style="left:68.6px;top:225.4px;width:1.4px;height:2px;background:#8a8a8a;"></div>
<div style="left:64.5px;top:228.65px;width:1.8px;height:2px;background:#6a6a6a;"></div>
<div style="left:66.3px;top:228.65px;width:1.9px;height:2px;background:#9a9a9a;"></div>
<div style="left:68.6px;top:228.65px;width:1.4px;height:2px;background:#8a8a8a;"></div>
<div style="left:64.5px;top:231.9px;width:1.8px;height:2px;background:#6a6a6a;"></div>
<div style="left:66.6px;top:231.9px;width:1.2px;height:2px;background:#9a9a9a;"></div>
<div style="left:68.6px;top:231.9px;width:1.4px;height:2px;background:#8a8a8a;"></div>
<div style="left:64.5px;top:235.15px;width:1.8px;height:2px;background:#6a6a6a;"></div>
<div style="left:66.6px;top:235.15px;width:1.2px;height:2px;background:#9a9a9a;"></div>
<div style="left:68.6px;top:235.15px;width:1.4px;height:2px;background:#8a8a8a;"></div>
<div style="left:64.5px;top:238.4px;width:1.8px;height:2px;background:#6a6a6a;"></div>
<div style="left:66.3px;top:238.4px;width:1.9px;height:2px;background:#9a9a9a;"></div>
<div style="left:68.6px;top:238.4px;width:1.4px;height:2px;background:#8a8a8a;"></div>
<div style="left:64.5px;top:241.65px;width:1.8px;height:2px;background:#6a6a6a;"></div>
<div style="left:66.6px;top:241.65px;width:1.2px;height:2px;background:#9a9a9a;"></div>
<div style="left:68.6px;top:241.65px;width:1.4px;height:2px;background:#8a8a8a;"></div>
<div style="left:64.5px;top:244.9px;width:1.8px;height:2px;background:#6a6a6a;"></div>
<div style="left:66.3px;top:244.9px;width:1.9px;height:2px;background:#9a9a9a;"></div>
<div style="left:68.6px;top:244.9px;width:1.4px;height:2px;background:#8a8a8a;"></div>
<div style="left:64.5px;top:248.15px;width:1.8px;height:2px;background:#6a6a6a;"></div>
<div style="left:66.6px;top:248.15px;width:1.2px;height:2px;background:#9a9a9a;"></div>
<div style="left:68.6px;top:248.15px;width:1.4px;height:2px;background:#8a8a8a;"></div>
<div style="left:64.5px;top:251.4px;width:1.8px;height:2px;background:#6a6a6a;"></div>
<div style="left:66.3px;top:251.4px;width:1.9px;height:2px;background:#9a9a9a;"></div>
<div style="left:68.6px;top:251.4px;width:1.4px;height:2px;background:#8a8a8a;"></div>
<div style="left:64.5px;top:254.65px;width:1.8px;height:2px;background:#6a6a6a;"></div>
<div style="left:66.6px;top:254.65px;width:1.2px;height:2px;background:#9a9a9a;"></div>
<div style="left:68.6px;top:254.65px;width:1.4px;height:2px;background:#8a8a8a;"></div>
<div style="left:64.5px;top:257.9px;width:1.8px;height:2px;background:#6a6a6a;"></div>
<div style="left:66.6px;top:257.9px;width:1.2px;height:2px;background:#9a9a9a;"></div>
<div style="left:68.6px;top:257.9px;width:1.4px;height:2px;background:#8a8a8a;"></div>
<div style="left:64.5px;top:261.15px;width:1.8px;height:2px;background:#6a6a6a;"></div>
<div style="left:66.3px;top:261.15px;width:1.9px;height:2px;background:#9a9a9a;"></div>
<div style="left:68.6px;top:261.15px;width:1.4px;height:2px;background:#8a8a8a;"></div>
<div style="left:64.5px;top:264.4px;width:1.8px;height:2px;background:#6a6a6a;"></div>
<div style="left:66.6px;top:264.4px;width:1.2px;height:2px;background:#9a9a9a;"></div>
<div style="left:68.6px;top:264.4px;width:1.4px;height:2px;background:#8a8a8a;"></div>
<div style="left:64.5px;top:267.65px;width:1.8px;height:2px;background:#6a6a6a;"></div>
<div style="left:66.3px;top:267.65px;width:1.9px;height:2px;background:#9a9a9a;"></div>
<div style="left:68.6px;top:267.65px;width:1.4px;height:2px;background:#8a8a8a;"></div>
<div style="left:64.5px;top:270.9px;width:1.8px;height:2px;background:#6a6a6a;"></div>
<div style="left:66.6px;top:270.9px;width:1.2px;height:2px;background:#9a9a9a;"></div>
<div style="left:68.6px;top:270.9px;width:1.4px;height:2px;background:#8a8a8a;"></div>
<div style="left:64.5px;top:274.15px;width:1.8px;height:2px;background:#6a6a6a;"></div>
<div style="left:66.6px;top:274.15px;width:1.2px;height:2px;background:#9a9a9a;"></div>
<div style="left:68.6px;top:274.15px;width:1.4px;height:2px;background:#8a8a8a;"></div>
<div style="left:64.5px;top:277.4px;width:1.8px;height:2px;background:#6a6a6a;"></div>
<div style="left:66.3px;top:277.4px;width:1.9px;height:2px;background:#9a9a9a;"></div>
<div style="left:68.6px;top:277.4px;width:1.4px;height:2px;background:#8a8a8a;"></div>
<div style="left:64.5px;top:280.65px;width:1.8px;height:2px;background:#6a6a6a;"></div>
<div style="left:66.6px;top:280.65px;width:1.2px;height:2px;background:#9a9a9a;"></div>
<div style="left:68.6px;top:280.65px;width:1.4px;height:2px;background:#8a8a8a;"></div>
<div style="left:64.5px;top:283.9px;width:1.8px;height:2px;background:#6a6a6a;"></div>
<div style="left:66.3px;top:283.9px;width:1.9px;height:2px;background:#9a9a9a;"></div>
<div style="left:68.6px;top:283.9px;width:1.4px;height:2px;background:#8a8a8a;"></div>
<div style="left:64.5px;top:287.15px;width:1.8px;height:2px;background:#6a6a6a;"></div>
<div style="left:66.6px;top:287.15px;width:1.2px;height:2px;background:#9a9a9a;"></div>
<div style="left:68.6px;top:287.15px;width:1.4px;height:2px;background:#8a8a8a;"></div>
<div style="left:64.5px;top:290.4px;width:1.8px;height:2px;background:#6a6a6a;"></div>
<div style="left:66.3px;top:290.4px;width:1.9px;height:2px;background:#9a9a9a;"></div>
<div style="left:68.6px;top:290.4px;width:1.4px;height:2px;background:#8a8a8a;"></div>
<div style="left:64.5px;top:293.65px;width:1.8px;height:2px;background:#6a6a6a;"></div>
<div style="left:66.6px;top:293.65px;width:1.2px;height:2px;background:#9a9a9a;"></div>
<div style="left:68.6px;top:293.65px;width:1.4px;height:2px;background:#8a8a8a;"></div>
<div style="left:64.5px;top:296.9px;width:1.8px;height:2px;background:#6a6a6a;"></div>
<div style="left:66.6px;top:296.9px;width:1.2px;height:2px;background:#9a9a9a;"></div>
<div style="left:68.6px;top:296.9px;width:1.4px;height:2px;background:#8a8a8a;"></div>
<div style="left:64.5px;top:300.15px;width:1.8px;height:2px;background:#6a6a6a;"></div>
<div style="left:66.3px;top:300.15px;width:1.9px;height:2px;background:#9a9a9a;"></div>
<div style="left:68.6px;top:300.15px;width:1.4px;height:2px;background:#8a8a8a;"></div>
<div style="left:64.5px;top:303.4px;width:1.8px;height:2px;background:#6a6a6a;"></div>
<div style="left:66.6px;top:303.4px;width:1.2px;height:2px;background:#9a9a9a;"></div>
<div style="left:68.6px;top:303.4px;width:1.4px;height:2px;background:#8a8a8a;"></div>
<div style="left:64.5px;top:306.65px;width:1.8px;height:2px;background:#6a6a6a;"></div>
<div style="left:66.3px;top:306.65px;width:1.9px;height:2px;background:#9a9a9a;"></div>
<div style="left:68.6px;top:306.65px;width:1.4px;height:2px;background:#8a8a8a;"></div>
<div style="left:64.5px;top:309.9px;width:1.8px;height:2px;background:#6a6a6a;"></div>
<div style="left:66.6px;top:309.9px;width:1.2px;height:2px;background:#9a9a9a;"></div>
<div style="left:68.6px;top:309.9px;width:1.4px;height:2px;background:#8a8a8a;"></div>
<div style="left:64.5px;top:313.15px;width:1.8px;height:2px;background:#6a6a6a;"></div>
<div style="left:66.6px;top:313.15px;width:1.2px;height:2px;background:#9a9a9a;"></div>
<div style="left:68.6px;top:313.15px;width:1.4px;height:2px;background:#8a8a8a;"></div>
<div style="left:64.5px;top:316.4px;width:1.8px;height:2px;background:#6a6a6a;"></div>
<div style="left:66.3px;top:316.4px;width:1.9px;height:2px;background:#9a9a9a;"></div>
<div style="left:68.6px;top:316.4px;width:1.4px;height:2px;background:#8a8a8a;"></div>
<div style="left:64.5px;top:319.65px;width:1.8px;height:2px;background:#6a6a6a;"></div>
<div style="left:66.6px;top:319.65px;width:1.2px;height:2px;background:#9a9a9a;"></div>
<div style="left:68.6px;top:319.65px;width:1.4px;height:2px;background:#8a8a8a;"></div>
<div style="left:64.5px;top:322.9px;width:1.8px;height:2px;background:#6a6a6a;"></div>
<div style="left:66.3px;top:322.9px;width:1.9px;height:2px;background:#9a9a9a;"></div>
<div style="left:68.6px;top:322.9px;width:1.4px;height:2px;background:#8a8a8a;"></div>
<div style="left:64.5px;top:326.15px;width:1.8px;height:2px;background:#6a6a6a;"></div>
<div style="left:66.6px;top:326.15px;width:1.2px;height:2px;background:#9a9a9a;"></div>
<div style="left:68.6px;top:326.15px;width:1.4px;height:2px;background:#8a8a8a;"></div>
<div style="left:64.5px;top:329.4px;width:1.8px;height:2px;background:#6a6a6a;"></div>
<div style="left:66.3px;top:329.4px;width:1.9px;height:2px;background:#9a9a9a;"></div>
<div style="left:68.6px;top:329.4px;width:1.4px;height:2px;background:#8a8a8a;"></div>
<div style="left:64.5px;top:332.65px;width:1.8px;height:2px;background:#6a6a6a;"></div>
<div style="left:66.6px;top:332.65px;width:1.2px;height:2px;background:#9a9a9a;"></div>
<div style="left:68.6px;top:332.65px;width:1.4px;height:2px;background:#8a8a8a;"></div>
<div style="left:64.5px;top:335.9px;width:1.8px;height:2px;background:#6a6a6a;"></div>
<div style="left:66.6px;top:335.9px;width:1.2px;height:2px;background:#9a9a9a;"></div>
<div style="left:68.6px;top:335.9px;width:1.4px;height:2px;background:#8a8a8a;"></div>
<div style="left:64.5px;top:339.15px;width:1.8px;height:2px;background:#6a6a6a;"></div>
<div style="left:66.3px;top:339.15px;width:1.9px;height:2px;background:#9a9a9a;"></div>
<div style="left:68.6px;top:339.15px;width:1.4px;height:2px;background:#8a8a8a;"></div>
<div style="left:64.5px;top:342.4px;width:1.8px;height:2px;background:#6a6a6a;"></div>
<div style="left:66.6px;top:342.4px;width:1.2px;height:2px;background:#9a9a9a;"></div>
<div style="left:68.6px;top:342.4px;width:1.4px;height:2px;background:#8a8a8a;"></div>
<div style="left:64.5px;top:345.65px;width:1.8px;height:2px;background:#6a6a6a;"></div>
<div style="left:66.3px;top:345.65px;width:1.9px;height:2px;background:#9a9a9a;"></div>
<div style="left:68.6px;top:345.65px;width:1.4px;height:2px;background:#8a8a8a;"></div>
<div style="left:64.5px;top:348.9px;width:1.8px;height:2px;background:#6a6a6a;"></div>
<div style="left:66.6px;top:348.9px;width:1.2px;height:2px;background:#9a9a9a;"></div>
<div style="left:68.6px;top:348.9px;width:1.4px;height:2px;background:#8a8a8a;"></div>
<div style="left:64.5px;top:352.15px;width:1.8px;height:2px;background:#6a6a6a;"></div>
<div style="left:66.6px;top:352.15px;width:1.2px;height:2px;background:#9a9a9a;"></div>
<div style="left:68.6px;top:352.15px;width:1.4px;height:2px;background:#8a8a8a;"></div>
<div style="left:64.5px;top:355.4px;width:1.8px;height:2px;background:#6a6a6a;"></div>
<div style="left:66.3px;top:355.4px;width:1.9px;height:2px;background:#9a9a9a;"></div>
<div style="left:68.6px;top:355.4px;width:1.4px;height:2px;background:#8a8a8a;"></div>
<div style="left:64.5px;top:358.65px;width:1.8px;height:2px;background:#6a6a6a;"></div>
<div style="left:66.6px;top:358.65px;width:1.2px;height:2px;background:#9a9a9a;"></div>
<div style="left:68.6px;top:358.65px;width:1.4px;height:2px;background:#8a8a8a;"></div>
<div style="left:64.5px;top:361.9px;width:1.8px;height:2px;background:#6a6a6a;"></div>
<div style="left:66.3px;top:361.9px;width:1.9px;height:2px;background:#9a9a9a;"></div>
<div style="left:68.6px;top:361.9px;width:1.4px;height:2px;background:#8a8a8a;"></div>
<div style="left:64.5px;top:365.15px;width:1.8px;height:2px;background:#6a6a6a;"></div>
<div style="left:66.6px;top:365.15px;width:1.2px;height:2px;background:#9a9a9a;"></div>
<div style="left:68.6px;top:365.15px;width:1.4px;height:2px;background:#8a8a8a;"></div>
<div style="left:64.5px;top:368.4px;width:1.8px;height:2px;background:#6a6a6a;"></div>
<div style="left:66.3px;top:368.4px;width:1.9px;height:2px;background:#9a9a9a;"></div>
<div style="left:68.6px;top:368.4px;width:1.4px;height:2px;background:#8a8a8a;"></div>
<div style="left:64.5px;top:371.65px;width:1.8px;height:2px;background:#6a6a6a;"></div>
<div style="left:66.6px;top:371.65px;width:1.2px;height:2px;background:#9a9a9a;"></div>
<div style="left:68.6px;top:371.65px;width:1.4px;height:2px;background:#8a8a8a;"></div>
<div style="left:64.5px;top:374.9px;width:1.8px;height:2px;background:#6a6a6a;"></div>
<div style="left:66.6px;top:374.9px;width:1.2px;height:2px;background:#9a9a9a;"></div>
<div style="left:68.6px;top:374.9px;width:1.4px;height:2px;background:#8a8a8a;"></div>
<div style="left:64.5px;top:378.15px;width:1.8px;height:2px;background:#6a6a6a;"></div>
<div style="left:66.3px;top:378.15px;width:1.9px;height:2px;background:#9a9a9a;"></div>
<div style="left:68.6px;top:378.15px;width:1.4px;height:2px;background:#8a8a8a;"></div>
<div style="left:70.2px;top:73.5px;width:0.5px;height:303.3px;background:#c0c0c0;"></div>
<div style="left:19px;top:379.7px;width:472.5px;height:6.8px;background:#050505;"></div>
<span style="left:21.5px;top:382.3px;font-size:3.0px;color:#ffffff;font-weight:bold">PERFORMANCE</span>
<span style="left:56.8px;top:380.9px;font-size:4.8px;color:#3fd83f;">0:12.63</span>
<span style="left:105.8px;top:380.9px;font-size:4.8px;color:#3fd83f;">G3</span>
<span style="left:118px;top:382.2px;font-size:2.8px;color:#ffffff;font-weight:bold">TREA:N:</span>
<div style="left:132px;top:381.2px;width:2px;height:4px;background:#6e2410;"></div>
<div style="left:135px;top:381.2px;width:2px;height:4px;background:#6e2410;"></div>
<div style="left:138px;top:381.2px;width:2px;height:4px;background:#6e2410;"></div>
<div style="left:141px;top:381.2px;width:2px;height:4px;background:#6e2410;"></div>
<div style="left:144px;top:381.2px;width:2px;height:4px;background:#6e2410;"></div>
<div style="left:147px;top:381.2px;width:2px;height:4px;background:#6e2410;"></div>
<div style="left:150px;top:381.2px;width:2px;height:4px;background:#6e2410;"></div>
<div style="left:153px;top:381.2px;width:2px;height:4px;background:#6e2410;"></div>
<div style="left:156px;top:381.2px;width:2px;height:4px;background:#6e2410;"></div>
<div style="left:159px;top:381.2px;width:2px;height:4px;background:#6e2410;"></div>
<div style="left:19px;top:387.6px;width:56px;height:1.2px;background:#cacaca;"></div>
<div style="left:16.7px;top:39.6px;width:3.2px;height:3.2px;background:#d6d6d6;border-radius:50%"></div>
<div style="left:21.8px;top:39.6px;width:3.2px;height:3.2px;background:#d6d6d6;border-radius:50%"></div>
<div style="left:26.9px;top:39.6px;width:3.2px;height:3.2px;background:#d6d6d6;border-radius:50%"></div>
<span style="left:225px;top:39.5px;font-size:3.4px;color:#222;font-weight:bold">Neuratron AudioScore Ultimate 2020</span>
<div style="left:17.8px;top:45.8px;width:4.6px;height:3.4px;background:#222;border-radius:0.5px"></div>
<div style="left:34.3px;top:44.6px;width:1.6px;height:3.6px;background:#222;border-radius:1px"></div>
<div style="left:33.6px;top:48px;width:3px;height:0.6px;background:#333;"></div>
<div style="left:51.2px;top:44.6px;width:3.6px;height:4.8px;background:#333;"></div>
<span style="left:17px;top:53.4px;font-size:2.6px;color:#666;">Open</span>
<span style="left:28px;top:53.4px;font-size:2.6px;color:#666;">Record Track</span>
<span style="left:45px;top:53.4px;font-size:2.6px;color:#666;">Create Part</span>
<div style="left:468.6px;top:45.5px;width:4.4px;height:4.4px;background:#444;border-radius:50%"></div>
<div style="left:476.8px;top:45.5px;width:4.4px;height:4.4px;background:#444;border-radius:50%"></div>
<div style="left:469.9px;top:46.6px;width:1.8px;height:2.2px;background:#eee;border-radius:50%"></div>
<svg style="left:486.4px;top:45px" width="6" height="6"><path d="M0.2,2.6 L3,0.2 L5.8,2.6 L5,2.6 L5,5.2 L3.6,5.2 L3.6,3.6 L2.4,3.6 L2.4,5.2 L1,5.2 L1,2.6 Z" fill="#333"/></svg>
<div style="left:21.6px;top:57.5px;width:3px;height:3px;background:#e07070;border-radius:50%"></div>
<div style="left:26.4px;top:57.5px;width:3px;height:3px;background:#d8d8d8;border-radius:50%"></div>
<div style="left:31.2px;top:57.5px;width:3px;height:3px;background:#d8d8d8;border-radius:50%"></div>
<span style="left:238.3px;top:57.4px;font-size:3.0px;color:#333;">デザートスター - ar MIDI ▾</span>
<span style="left:20.5px;top:69.8px;font-size:2.5px;color:#555;">Clear Track &nbsp;Transcribe Undo Replace Audio &nbsp;Add Instrument</span>
<span style="left:84px;top:69.8px;font-size:2.5px;color:#555;">&gt; Convert to &amp; Edit</span>
<span style="left:110px;top:69.8px;font-size:2.5px;color:#555;">&gt; Create Score</span>
<span style="left:160px;top:69.8px;font-size:2.5px;color:#555;">Save</span>
<span style="left:167.5px;top:69.8px;font-size:2.5px;color:#aaa;">Send to Sibelius</span>
<span style="left:190.4px;top:69.8px;font-size:2.5px;color:#555;">Parameters</span>
<svg style="left:49.5px;top:63px" width="6" height="6"><rect x="0.8" y="0.5" width="3.6" height="4.4" fill="none" stroke="#444" stroke-width="0.7"/><path d="M1.5,2.7 L3.8,2.7" stroke="#444" stroke-width="0.7"/></svg>
<svg style="left:93.5px;top:63px" width="6" height="6"><rect x="0.5" y="0.5" width="3.6" height="4.4" fill="none" stroke="#444" stroke-width="0.7"/><path d="M2.5,2.7 L5.5,2.7" stroke="#444" stroke-width="0.7"/></svg>
<div style="left:116px;top:63.6px;width:5.2px;height:3.4px;background:#999;border:0.5px solid #444"></div>
<svg style="left:132.7px;top:62.8px" width="5" height="5"><circle cx="2.2" cy="2.2" r="1.6" fill="none" stroke="#555" stroke-width="0.7"/><path d="M3.3,3.3 L4.6,4.6" stroke="#555" stroke-width="0.8"/></svg>
<svg style="left:141px;top:62.8px" width="5" height="5"><circle cx="2.2" cy="2.2" r="1.6" fill="none" stroke="#555" stroke-width="0.7"/><path d="M3.3,3.3 L4.6,4.6" stroke="#555" stroke-width="0.8"/></svg>
<svg style="left:149.4px;top:62.8px" width="5" height="5"><circle cx="2.2" cy="2.2" r="1.6" fill="none" stroke="#555" stroke-width="0.7"/><path d="M3.3,3.3 L4.6,4.6" stroke="#555" stroke-width="0.8"/></svg>
<svg style="left:160px;top:62.8px" width="5" height="5"><path d="M0.5,0.5 H3.8 L4.5,1.2 V4.5 H0.5 Z" fill="#333"/><rect x="1.3" y="0.8" width="2.2" height="1.3" fill="#ddd"/></svg>
<div style="left:174.5px;top:63.2px;width:3.6px;height:3.8px;background:transparent;border:0.6px solid #bbb"></div>
<div style="left:197.2px;top:62.8px;width:1px;height:4.6px;background:#333;transform:rotate(30deg)"></div>
<div style="left:474.5px;top:73.8px;width:16.2px;height:5.2px;background:#bdbdbd;clip-path:polygon(18% 0,100% 0,100% 100%,0 100%)"></div>
<span style="left:478.3px;top:75px;font-size:2.6px;color:#111;font-weight:bold">Track 1</span>
<div style="left:485.9px;top:80.6px;width:3.4px;height:55.8px;background:#58585e;border:0.5px solid #333"></div>
<div style="left:486.3px;top:81px;width:2.6px;height:5px;background:#9a9a9a;"></div>
<div style="left:486.3px;top:87px;width:2.6px;height:17px;background:#8a8a8a;"></div>
<div style="left:486.3px;top:133.5px;width:2.6px;height:2.6px;background:#222;"></div>
<span style="left:29.5px;top:230.2px;font-size:4.2px;color:#333;">Audio</span>
<div style="left:492.8px;top:223px;width:258.2px;height:303px;background:#eeeeee;"></div>
<div style="left:492.8px;top:255.5px;width:33.2px;height:40.5px;background:#f7f5ec;"></div>
<div style="left:492.8px;top:296px;width:33.2px;height:75.5px;background:#d8d8d4;"></div>
<div style="left:492.8px;top:371.5px;width:33.2px;height:44px;background:#ffffff;"></div>
<div style="left:492.8px;top:415px;width:33.2px;height:111px;background:#dcdcd8;"></div>
<span style="left:493.3px;top:256.3px;font-size:3.2px;color:#444;font-weight:bold">Sound</span>
<div style="left:490.4px;top:223px;width:2.4px;height:165px;background:#d0d0d4;"></div>
<svg style="left:493px;top:271.3px" width="10" height="9"><rect x="0.5" y="0.5" width="8" height="7.6" fill="none" stroke="#333" stroke-width="0.8"/><path d="M0.5,3 H8.5 M0.5,5.5 H8.5" stroke="#333" stroke-width="0.7"/></svg>
<svg style="left:493px;top:266.8px" width="5" height="4"><path d="M0.5,0.5 L3,3.5" stroke="#444" stroke-width="0.6"/></svg>
<svg style="left:493px;top:290.2px" width="10" height="9"><rect x="0.5" y="0.5" width="8" height="7.6" fill="none" stroke="#333" stroke-width="0.8"/><path d="M0.5,3 H8.5 M0.5,5.5 H8.5" stroke="#333" stroke-width="0.7"/></svg>
<svg style="left:493px;top:285.7px" width="5" height="4"><path d="M0.5,0.5 L3,3.5" stroke="#444" stroke-width="0.6"/></svg>
<div style="left:493.5px;top:347px;width:9px;height:0.4px;background:#999;"></div>
<div style="left:493.5px;top:348.8px;width:9px;height:0.4px;background:#999;"></div>
<div style="left:493.5px;top:350.6px;width:9px;height:0.4px;background:#999;"></div>
<div style="left:493.5px;top:352.4px;width:9px;height:0.4px;background:#999;"></div>
<div style="left:493.5px;top:354.2px;width:9px;height:0.4px;background:#999;"></div>
<div style="left:493.5px;top:369px;width:9px;height:0.4px;background:#999;"></div>
<div style="left:493.5px;top:370.8px;width:9px;height:0.4px;background:#999;"></div>
<div style="left:493.5px;top:372.6px;width:9px;height:0.4px;background:#999;"></div>
<div style="left:493.5px;top:374.4px;width:9px;height:0.4px;background:#999;"></div>
<div style="left:493.5px;top:376.2px;width:9px;height:0.4px;background:#999;"></div>
<div style="left:493.5px;top:377px;width:9px;height:0.4px;background:#999;"></div>
<div style="left:493.5px;top:378.8px;width:9px;height:0.4px;background:#999;"></div>
<div style="left:493.5px;top:380.6px;width:9px;height:0.4px;background:#999;"></div>
<div style="left:493.5px;top:382.4px;width:9px;height:0.4px;background:#999;"></div>
<div style="left:493.5px;top:384.2px;width:9px;height:0.4px;background:#999;"></div>
<div style="left:526px;top:255.5px;width:1.1px;height:270.5px;background:#6a6a6a;"></div>
<div style="left:527.1px;top:255.5px;width:223.9px;height:270.5px;background:#dddcee;"></div>
<div style="left:728.6px;top:225.8px;width:4.4px;height:4.4px;background:#444;border-radius:50%"></div>
<div style="left:736.6px;top:225.8px;width:4.4px;height:4.4px;background:#444;border-radius:50%"></div>
<svg style="left:746.2px;top:225.2px" width="6" height="6"><path d="M0.2,2.6 L3,0.2 L5.8,2.6 L5,2.6 L5,5.2 L3.6,5.2 L3.6,3.6 L2.4,3.6 L2.4,5.2 L1,5.2 L1,2.6 Z" fill="#333"/></svg>
<span style="left:494px;top:237.3px;font-size:3px;color:#888;">x ?</span>
<div style="left:534.6px;top:278px;width:196.9px;height:232.3px;background:#f8f6ed;box-shadow:0 0 1.5px 0.5px rgba(0,0,0,0.22)"></div>
<div style="left:534.6px;top:278px;width:196.9px;height:3.2px;background:#f1f0ea;"></div>
<span style="left:630px;top:278.8px;font-size:2.2px;color:#bbb;">Full Score - Staves</span>
<svg style="position:absolute;left:534.6px;top:278px" width="196.9" height="232.3"><line x1="1" y1="38.2" x2="196.9" y2="38.2" stroke="#2a2a2a" stroke-width="0.8"/><line x1="1" y1="41.52" x2="196.9" y2="41.52" stroke="#2a2a2a" stroke-width="0.8"/><line x1="1" y1="44.85" x2="196.9" y2="44.85" stroke="#2a2a2a" stroke-width="0.8"/><line x1="1" y1="48.18" x2="196.9" y2="48.18" stroke="#2a2a2a" stroke-width="0.8"/><line x1="1" y1="51.5" x2="196.9" y2="51.5" stroke="#2a2a2a" stroke-width="0.8"/><line x1="26" y1="38.2" x2="26" y2="51.5" stroke="#222" stroke-width="0.9"/><line x1="109" y1="38.2" x2="109" y2="51.5" stroke="#222" stroke-width="0.9"/><line x1="181" y1="38.2" x2="181" y2="51.5" stroke="#222" stroke-width="0.9"/><line x1="1" y1="76.4" x2="196.9" y2="76.4" stroke="#2a2a2a" stroke-width="0.8"/><line x1="1" y1="79.72" x2="196.9" y2="79.72" stroke="#2a2a2a" stroke-width="0.8"/><line x1="1" y1="83.05" x2="196.9" y2="83.05" stroke="#2a2a2a" stroke-width="0.8"/><line x1="1" y1="86.38" x2="196.9" y2="86.38" stroke="#2a2a2a" stroke-width="0.8"/><line x1="1" y1="89.7" x2="196.9" y2="89.7" stroke="#2a2a2a" stroke-width="0.8"/><line x1="26" y1="76.4" x2="26" y2="89.7" stroke="#222" stroke-width="0.9"/><line x1="109" y1="76.4" x2="109" y2="89.7" stroke="#222" stroke-width="0.9"/><line x1="181" y1="76.4" x2="181" y2="89.7" stroke="#222" stroke-width="0.9"/><line x1="1" y1="114.5" x2="196.9" y2="114.5" stroke="#2a2a2a" stroke-width="0.8"/><line x1="1" y1="117.95" x2="196.9" y2="117.95" stroke="#2a2a2a" stroke-width="0.8"/><line x1="1" y1="121.4" x2="196.9" y2="121.4" stroke="#2a2a2a" stroke-width="0.8"/><line x1="1" y1="124.85" x2="196.9" y2="124.85" stroke="#2a2a2a" stroke-width="0.8"/><line x1="1" y1="128.3" x2="196.9" y2="128.3" stroke="#2a2a2a" stroke-width="0.8"/><line x1="26" y1="114.5" x2="26" y2="128.3" stroke="#222" stroke-width="0.9"/><line x1="109" y1="114.5" x2="109" y2="128.3" stroke="#222" stroke-width="0.9"/><line x1="181" y1="114.5" x2="181" y2="128.3" stroke="#222" stroke-width="0.9"/><line x1="1" y1="148.1" x2="196.9" y2="148.1" stroke="#2a2a2a" stroke-width="0.8"/><line x1="1" y1="151.6" x2="196.9" y2="151.6" stroke="#2a2a2a" stroke-width="0.8"/><line x1="1" y1="155.1" x2="196.9" y2="155.1" stroke="#2a2a2a" stroke-width="0.8"/><line x1="1" y1="158.6" x2="196.9" y2="158.6" stroke="#2a2a2a" stroke-width="0.8"/><line x1="1" y1="162.1" x2="196.9" y2="162.1" stroke="#2a2a2a" stroke-width="0.8"/><line x1="26" y1="148.1" x2="26" y2="162.1" stroke="#222" stroke-width="0.9"/><line x1="109" y1="148.1" x2="109" y2="162.1" stroke="#222" stroke-width="0.9"/><line x1="181" y1="148.1" x2="181" y2="162.1" stroke="#222" stroke-width="0.9"/><line x1="1" y1="194.7" x2="196.9" y2="194.7" stroke="#2a2a2a" stroke-width="0.8"/><line x1="1" y1="198.35" x2="196.9" y2="198.35" stroke="#2a2a2a" stroke-width="0.8"/><line x1="1" y1="202" x2="196.9" y2="202" stroke="#2a2a2a" stroke-width="0.8"/><line x1="1" y1="205.65" x2="196.9" y2="205.65" stroke="#2a2a2a" stroke-width="0.8"/><line x1="1" y1="209.3" x2="196.9" y2="209.3" stroke="#2a2a2a" stroke-width="0.8"/><line x1="26" y1="194.7" x2="26" y2="209.3" stroke="#222" stroke-width="0.9"/><line x1="109" y1="194.7" x2="109" y2="209.3" stroke="#222" stroke-width="0.9"/><line x1="181" y1="194.7" x2="181" y2="209.3" stroke="#222" stroke-width="0.9"/><path d="M7.4,40 L9.6,43 L7.4,46 L9.4,48.5" stroke="#111" stroke-width="1" fill="none"/><path d="M34.4,40 L36.6,43 L34.4,46 L36.4,48.5" stroke="#111" stroke-width="1" fill="none"/><ellipse cx="54.9" cy="38.2" rx="2.05" ry="1.5" transform="rotate(-20 54.9 38.2)" fill="#111"/><line x1="53.2" y1="38.5" x2="53.2" y2="50.5" stroke="#111" stroke-width="0.7"/><ellipse cx="74" cy="38.8" rx="2.05" ry="1.5" transform="rotate(-20 74 38.8)" fill="#111"/><line x1="72.3" y1="39.1" x2="72.3" y2="51" stroke="#111" stroke-width="0.7"/><ellipse cx="92.4" cy="42" rx="2.05" ry="1.5" transform="rotate(-20 92.4 42)" fill="#111"/><line x1="90.7" y1="42.3" x2="90.7" y2="54" stroke="#111" stroke-width="0.7"/><ellipse cx="118.7" cy="43.2" rx="2.05" ry="1.5" transform="rotate(-20 118.7 43.2)" fill="#111"/><line x1="117" y1="43.5" x2="117" y2="55.9" stroke="#111" stroke-width="0.7"/><ellipse cx="134.6" cy="45.6" rx="2.05" ry="1.5" transform="rotate(-20 134.6 45.6)" fill="#111"/><line x1="132.9" y1="45.9" x2="132.9" y2="57" stroke="#111" stroke-width="0.7"/><ellipse cx="150.5" cy="41.7" rx="2.05" ry="1.5" transform="rotate(-20 150.5 41.7)" fill="#111"/><line x1="148.8" y1="42" x2="148.8" y2="54" stroke="#111" stroke-width="0.7"/><ellipse cx="167.1" cy="46.6" rx="2.05" ry="1.5" transform="rotate(-20 167.1 46.6)" fill="#111"/><line x1="168.8" y1="46.3" x2="168.8" y2="34.6" stroke="#111" stroke-width="0.7"/><ellipse cx="190.4" cy="45.2" rx="2.05" ry="1.5" transform="rotate(-20 190.4 45.2)" fill="#111"/><line x1="188.7" y1="45.5" x2="188.7" y2="57" stroke="#111" stroke-width="0.7"/><path d="M118.4,38 Q135.9,34 153.4,37" stroke="#222" stroke-width="0.7" fill="none"/><line x1="187.4" y1="28" x2="197.4" y2="28" stroke="#222" stroke-width="0.6"/><line x1="187.4" y1="34.5" x2="197.4" y2="34.5" stroke="#222" stroke-width="0.6"/><line x1="113.4" y1="40" x2="113.4" y2="46" stroke="#222" stroke-width="0.6"/><ellipse cx="8.4" cy="85.5" rx="2.05" ry="1.5" transform="rotate(-20 8.4 85.5)" fill="#111"/><line x1="10.1" y1="85.2" x2="10.1" y2="73" stroke="#111" stroke-width="0.7"/><ellipse cx="35.5" cy="83.5" rx="2.05" ry="1.5" transform="rotate(-20 35.5 83.5)" fill="#111"/><line x1="33.8" y1="83.8" x2="33.8" y2="96" stroke="#111" stroke-width="0.7"/><ellipse cx="53.8" cy="85.5" rx="2.05" ry="1.5" transform="rotate(-20 53.8 85.5)" fill="#111"/><line x1="55.5" y1="85.2" x2="55.5" y2="73" stroke="#111" stroke-width="0.7"/><ellipse cx="73.4" cy="87" rx="2.05" ry="1.5" transform="rotate(-20 73.4 87)" fill="#111"/><line x1="75.1" y1="86.7" x2="75.1" y2="76" stroke="#111" stroke-width="0.7"/><ellipse cx="92.4" cy="83.5" rx="2.05" ry="1.5" transform="rotate(-20 92.4 83.5)" fill="#111"/><line x1="90.7" y1="83.8" x2="90.7" y2="96" stroke="#111" stroke-width="0.7"/><ellipse cx="118.7" cy="85" rx="2.05" ry="1.5" transform="rotate(-20 118.7 85)" fill="#111"/><line x1="120.4" y1="84.7" x2="120.4" y2="73" stroke="#111" stroke-width="0.7"/><ellipse cx="134.6" cy="87" rx="2.05" ry="1.5" transform="rotate(-20 134.6 87)" fill="#111"/><line x1="136.3" y1="86.7" x2="136.3" y2="74" stroke="#111" stroke-width="0.7"/><ellipse cx="150.5" cy="89" rx="2.05" ry="1.5" transform="rotate(-20 150.5 89)" fill="#111"/><line x1="152.2" y1="88.7" x2="152.2" y2="76" stroke="#111" stroke-width="0.7"/><ellipse cx="167.1" cy="90.4" rx="2.05" ry="1.5" transform="rotate(-20 167.1 90.4)" fill="#111"/><line x1="168.8" y1="90.1" x2="168.8" y2="77" stroke="#111" stroke-width="0.7"/><ellipse cx="190.4" cy="90.4" rx="2.05" ry="1.5" transform="rotate(-20 190.4 90.4)" fill="#111"/><line x1="192.1" y1="90.1" x2="192.1" y2="78" stroke="#111" stroke-width="0.7"/><path d="M36.4,78 Q90.9,72 145.4,74" stroke="#222" stroke-width="0.7" fill="none"/><rect x="65.4" y="118.2" width="4" height="1.6" fill="#111"/><rect x="143.2" y="118.2" width="4" height="1.6" fill="#111"/><ellipse cx="8.7" cy="151.4" rx="2.05" ry="1.5" transform="rotate(-20 8.7 151.4)" fill="#111"/><line x1="7" y1="151.7" x2="7" y2="163.4" stroke="#111" stroke-width="0.7"/><ellipse cx="35.9" cy="149.9" rx="2.05" ry="1.5" transform="rotate(-20 35.9 149.9)" fill="#111"/><line x1="34.2" y1="150.2" x2="34.2" y2="162" stroke="#111" stroke-width="0.7"/><ellipse cx="53.8" cy="155" rx="2.05" ry="1.5" transform="rotate(-20 53.8 155)" fill="#111"/><line x1="52.1" y1="155.3" x2="52.1" y2="167" stroke="#111" stroke-width="0.7"/><ellipse cx="73.8" cy="153.4" rx="1.9" ry="1.35" transform="rotate(-20 73.8 153.4)" fill="none" stroke="#111" stroke-width="0.6"/><line x1="72.1" y1="153.7" x2="72.1" y2="166" stroke="#111" stroke-width="0.7"/><ellipse cx="118.7" cy="153.4" rx="1.9" ry="1.35" transform="rotate(-20 118.7 153.4)" fill="none" stroke="#111" stroke-width="0.6"/><line x1="117" y1="153.7" x2="117" y2="165.5" stroke="#111" stroke-width="0.7"/><ellipse cx="149.9" cy="154.8" rx="2.05" ry="1.5" transform="rotate(-20 149.9 154.8)" fill="#111"/><line x1="148.2" y1="155.1" x2="148.2" y2="167" stroke="#111" stroke-width="0.7"/><ellipse cx="166.4" cy="157" rx="2.05" ry="1.5" transform="rotate(-20 166.4 157)" fill="#111"/><line x1="168.1" y1="156.7" x2="168.1" y2="144.1" stroke="#111" stroke-width="0.7"/><ellipse cx="190.4" cy="158.8" rx="2.2" ry="1.5" fill="none" stroke="#111" stroke-width="0.9"/><path d="M37.4,147 Q45.4,143 53.4,150" stroke="#222" stroke-width="0.7" fill="none"/><path d="M118.4,150 Q143.4,142 168.4,147" stroke="#222" stroke-width="0.7" fill="none"/><line x1="49.4" y1="152" x2="49.4" y2="158" stroke="#222" stroke-width="0.6"/><line x1="145.4" y1="152" x2="145.4" y2="158" stroke="#222" stroke-width="0.6"/><line x1="162.4" y1="154" x2="162.4" y2="160" stroke="#222" stroke-width="0.6"/><line x1="186.4" y1="140" x2="196.4" y2="140" stroke="#222" stroke-width="0.6"/><line x1="186.4" y1="143.5" x2="196.4" y2="143.5" stroke="#222" stroke-width="0.6"/><ellipse cx="36.2" cy="201.5" rx="1.9" ry="1.35" transform="rotate(-20 36.2 201.5)" fill="none" stroke="#111" stroke-width="0.6"/><line x1="34.5" y1="201.8" x2="34.5" y2="213.9" stroke="#111" stroke-width="0.7"/><ellipse cx="73.6" cy="200.2" rx="2.05" ry="1.5" transform="rotate(-20 73.6 200.2)" fill="#111"/><line x1="71.9" y1="200.5" x2="71.9" y2="213" stroke="#111" stroke-width="0.7"/><ellipse cx="91.8" cy="205.4" rx="2.05" ry="1.5" transform="rotate(-20 91.8 205.4)" fill="#111"/><line x1="93.5" y1="205.1" x2="93.5" y2="193.7" stroke="#111" stroke-width="0.7"/><ellipse cx="118.7" cy="203.7" rx="2.05" ry="1.5" transform="rotate(-20 118.7 203.7)" fill="#111"/><line x1="120.4" y1="203.4" x2="120.4" y2="191.7" stroke="#111" stroke-width="0.7"/><ellipse cx="134.6" cy="209.3" rx="2.05" ry="1.5" transform="rotate(-20 134.6 209.3)" fill="#111"/><line x1="136.3" y1="209" x2="136.3" y2="197.6" stroke="#111" stroke-width="0.7"/><ellipse cx="150.2" cy="207.4" rx="1.9" ry="1.35" transform="rotate(-20 150.2 207.4)" fill="none" stroke="#111" stroke-width="0.6"/><line x1="151.9" y1="207.1" x2="151.9" y2="195" stroke="#111" stroke-width="0.7"/><ellipse cx="190.5" cy="207.4" rx="1.9" ry="1.35" transform="rotate(-20 190.5 207.4)" fill="none" stroke="#111" stroke-width="0.6"/><line x1="192.2" y1="207.1" x2="192.2" y2="195" stroke="#111" stroke-width="0.7"/><path d="M118.4,206 Q126.9,210 135.4,212" stroke="#222" stroke-width="0.7" fill="none"/><line x1="86.6" y1="202" x2="86.6" y2="208" stroke="#222" stroke-width="0.7"/><line x1="186.4" y1="188" x2="196.4" y2="188" stroke="#222" stroke-width="0.6"/><line x1="186.4" y1="192" x2="196.4" y2="192" stroke="#222" stroke-width="0.6"/></svg>
<span style="left:574.2px;top:337.6px;width:30px;text-align:center;font-family:'Liberation Serif',serif;font-size:8.6px;color:#111;-webkit-text-stroke:0.25px #111">und</span>
<span style="left:593.2px;top:337.6px;width:30px;text-align:center;font-family:'Liberation Serif',serif;font-size:8.6px;color:#111;-webkit-text-stroke:0.25px #111">mir</span>
<span style="left:611.8px;top:337.6px;width:30px;text-align:center;font-family:'Liberation Serif',serif;font-size:8.6px;color:#111;-webkit-text-stroke:0.25px #111">ist</span>
<span style="left:638.2px;top:337.6px;width:30px;text-align:center;font-family:'Liberation Serif',serif;font-size:8.6px;color:#111;-webkit-text-stroke:0.25px #111">we</span>
<span style="left:662px;top:337.6px;width:30px;text-align:center;font-family:'Liberation Serif',serif;font-size:8.6px;color:#111;-webkit-text-stroke:0.25px #111">-</span>
<span style="left:686.4px;top:337.6px;width:30px;text-align:center;font-family:'Liberation Serif',serif;font-size:8.6px;color:#111;-webkit-text-stroke:0.25px #111">he,</span>
<span style="left:710.6px;top:337.6px;width:30px;text-align:center;font-family:'Liberation Serif',serif;font-size:8.6px;color:#111;-webkit-text-stroke:0.25px #111">we</span>
<span style="left:528.6px;top:379px;width:30px;text-align:center;font-family:'Liberation Serif',serif;font-size:8.6px;color:#111;-webkit-text-stroke:0.25px #111">ist</span>
<span style="left:555.8px;top:379px;width:30px;text-align:center;font-family:'Liberation Serif',serif;font-size:8.6px;color:#111;-webkit-text-stroke:0.25px #111">we</span>
<span style="left:570.8px;top:379px;width:30px;text-align:center;font-family:'Liberation Serif',serif;font-size:8.6px;color:#111;-webkit-text-stroke:0.25px #111">-</span>
<span style="left:591.1px;top:379px;width:30px;text-align:center;font-family:'Liberation Serif',serif;font-size:8.6px;color:#111;-webkit-text-stroke:0.25px #111">-</span>
<span style="left:611.6px;top:379px;width:30px;text-align:center;font-family:'Liberation Serif',serif;font-size:8.6px;color:#111;-webkit-text-stroke:0.25px #111">-</span>
<span style="left:632.3px;top:379px;width:30px;text-align:center;font-family:'Liberation Serif',serif;font-size:8.6px;color:#111;-webkit-text-stroke:0.25px #111">-</span>
<span style="left:652.9px;top:379px;width:30px;text-align:center;font-family:'Liberation Serif',serif;font-size:8.6px;color:#111;-webkit-text-stroke:0.25px #111">-</span>
<span style="left:673.4px;top:379px;width:30px;text-align:center;font-family:'Liberation Serif',serif;font-size:8.6px;color:#111;-webkit-text-stroke:0.25px #111">-</span>
<span style="left:686.7px;top:379px;width:30px;text-align:center;font-family:'Liberation Serif',serif;font-size:8.6px;color:#111;-webkit-text-stroke:0.25px #111">he,</span>
<span style="left:710.4px;top:379px;width:30px;text-align:center;font-family:'Liberation Serif',serif;font-size:8.6px;color:#111;-webkit-text-stroke:0.25px #111">mir</span>
<span style="left:528.4px;top:448.2px;width:30px;text-align:center;font-family:'Liberation Serif',serif;font-size:8.6px;color:#111;-webkit-text-stroke:0.25px #111">ist</span>
<span style="left:555.8px;top:448.2px;width:30px;text-align:center;font-family:'Liberation Serif',serif;font-size:8.6px;color:#111;-webkit-text-stroke:0.25px #111">we</span>
<span style="left:573.7px;top:448.2px;width:30px;text-align:center;font-family:'Liberation Serif',serif;font-size:8.6px;color:#111;-webkit-text-stroke:0.25px #111">-</span>
<span style="left:593.2px;top:448.2px;width:30px;text-align:center;font-family:'Liberation Serif',serif;font-size:8.6px;color:#111;-webkit-text-stroke:0.25px #111">he,</span>
<span style="left:638.5px;top:448.2px;width:30px;text-align:center;font-family:'Liberation Serif',serif;font-size:8.6px;color:#111;-webkit-text-stroke:0.25px #111">we</span>
<span style="left:652.9px;top:448.2px;width:30px;text-align:center;font-family:'Liberation Serif',serif;font-size:8.6px;color:#111;-webkit-text-stroke:0.25px #111">-</span>
<span style="left:673.7px;top:448.2px;width:30px;text-align:center;font-family:'Liberation Serif',serif;font-size:8.6px;color:#111;-webkit-text-stroke:0.25px #111">-</span>
<span style="left:693.9px;top:448.2px;width:30px;text-align:center;font-family:'Liberation Serif',serif;font-size:8.6px;color:#111;-webkit-text-stroke:0.25px #111">-</span>
<span style="left:710.8px;top:448.2px;width:30px;text-align:center;font-family:'Liberation Serif',serif;font-size:8.6px;color:#111;-webkit-text-stroke:0.25px #111">he;</span>
<span style="left:555.5px;top:494.4px;width:30px;text-align:center;font-family:'Liberation Serif',serif;font-size:8.6px;color:#111;-webkit-text-stroke:0.25px #111">und</span>
<span style="left:592.9px;top:494.4px;width:30px;text-align:center;font-family:'Liberation Serif',serif;font-size:8.6px;color:#111;-webkit-text-stroke:0.25px #111">mir</span>
<span style="left:611.4px;top:494.4px;width:30px;text-align:center;font-family:'Liberation Serif',serif;font-size:8.6px;color:#111;-webkit-text-stroke:0.25px #111">ist</span>
<span style="left:638.5px;top:494.4px;width:30px;text-align:center;font-family:'Liberation Serif',serif;font-size:8.6px;color:#111;-webkit-text-stroke:0.25px #111">we</span>
<span style="left:653.5px;top:494.4px;width:30px;text-align:center;font-family:'Liberation Serif',serif;font-size:8.6px;color:#111;-webkit-text-stroke:0.25px #111">-</span>
<span style="left:670.1px;top:494.4px;width:30px;text-align:center;font-family:'Liberation Serif',serif;font-size:8.6px;color:#111;-webkit-text-stroke:0.25px #111">he,</span>
<span style="left:710.3px;top:494.4px;width:30px;text-align:center;font-family:'Liberation Serif',serif;font-size:8.6px;color:#111;-webkit-text-stroke:0.25px #111">we</span>
<svg style="left:550px;top:237.6px;filter:drop-shadow(0 0.5px 1px rgba(0,0,0,0.3))" width="83" height="33"><rect x="0.25" y="0.25" width="81.8" height="31.6" rx="1" fill="#f1f1f1" stroke="#cfcfcf" stroke-width="0.5"/><rect x="6" y="0.6" width="70" height="0.5" fill="#e0e0e0"/><rect x="35" y="1.4" width="11" height="1" fill="#d8d8d8"/><rect x="0.7" y="4.3" width="6.3" height="6.4" fill="#fafafa" stroke="#dadada" stroke-width="0.4"/><rect x="7.45" y="4.3" width="6.3" height="6.4" fill="#fafafa" stroke="#dadada" stroke-width="0.4"/><rect x="14.2" y="4.3" width="6.3" height="6.4" fill="#fafafa" stroke="#dadada" stroke-width="0.4"/><rect x="20.95" y="4.3" width="6.3" height="6.4" fill="#fafafa" stroke="#dadada" stroke-width="0.4"/><rect x="27.7" y="4.3" width="6.3" height="6.4" fill="#fafafa" stroke="#dadada" stroke-width="0.4"/><rect x="34.45" y="4.3" width="6.3" height="6.4" fill="#fafafa" stroke="#dadada" stroke-width="0.4"/><rect x="41.2" y="4.3" width="6.3" height="6.4" fill="#fafafa" stroke="#dadada" stroke-width="0.4"/><rect x="47.95" y="4.3" width="6.3" height="6.4" fill="#fafafa" stroke="#dadada" stroke-width="0.4"/><rect x="54.7" y="4.3" width="6.3" height="6.4" fill="#fafafa" stroke="#dadada" stroke-width="0.4"/><rect x="61.45" y="4.3" width="6.3" height="6.4" fill="#fafafa" stroke="#dadada" stroke-width="0.4"/><rect x="68.2" y="4.3" width="6.3" height="6.4" fill="#fafafa" stroke="#dadada" stroke-width="0.4"/><rect x="74.95" y="4.3" width="6.3" height="6.4" fill="#fafafa" stroke="#dadada" stroke-width="0.4"/><rect x="0.7" y="11.1" width="6.3" height="6.4" fill="#fafafa" stroke="#dadada" stroke-width="0.4"/><rect x="7.45" y="11.1" width="6.3" height="6.4" fill="#fafafa" stroke="#dadada" stroke-width="0.4"/><rect x="14.2" y="11.1" width="6.3" height="6.4" fill="#fafafa" stroke="#dadada" stroke-width="0.4"/><rect x="20.95" y="11.1" width="6.3" height="6.4" fill="#fafafa" stroke="#dadada" stroke-width="0.4"/><rect x="27.7" y="11.1" width="6.3" height="6.4" fill="#fafafa" stroke="#dadada" stroke-width="0.4"/><rect x="34.45" y="11.1" width="6.3" height="6.4" fill="#fafafa" stroke="#dadada" stroke-width="0.4"/><rect x="41.2" y="11.1" width="6.3" height="6.4" fill="#fafafa" stroke="#dadada" stroke-width="0.4"/><rect x="68.2" y="11.1" width="6.3" height="6.4" fill="#fafafa" stroke="#dadada" stroke-width="0.4"/><rect x="74.95" y="11.1" width="6.3" height="6.4" fill="#fafafa" stroke="#dadada" stroke-width="0.4"/><rect x="0.7" y="17.9" width="6.3" height="6.4" fill="#fafafa" stroke="#dadada" stroke-width="0.4"/><rect x="7.45" y="17.9" width="6.3" height="6.4" fill="#fafafa" stroke="#dadada" stroke-width="0.4"/><rect x="14.2" y="17.9" width="6.3" height="6.4" fill="#fafafa" stroke="#dadada" stroke-width="0.4"/><rect x="20.95" y="17.9" width="6.3" height="6.4" fill="#fafafa" stroke="#dadada" stroke-width="0.4"/><rect x="27.7" y="17.9" width="6.3" height="6.4" fill="#fafafa" stroke="#dadada" stroke-width="0.4"/><rect x="34.45" y="17.9" width="6.3" height="6.4" fill="#fafafa" stroke="#dadada" stroke-width="0.4"/><rect x="41.2" y="17.9" width="6.3" height="6.4" fill="#fafafa" stroke="#dadada" stroke-width="0.4"/><rect x="47.95" y="17.9" width="6.3" height="6.4" fill="#fafafa" stroke="#dadada" stroke-width="0.4"/><rect x="54.7" y="17.9" width="6.3" height="6.4" fill="#fafafa" stroke="#dadada" stroke-width="0.4"/><rect x="61.45" y="17.9" width="6.3" height="6.4" fill="#fafafa" stroke="#dadada" stroke-width="0.4"/><rect x="68.2" y="17.9" width="6.3" height="6.4" fill="#fafafa" stroke="#dadada" stroke-width="0.4"/><rect x="74.95" y="17.9" width="6.3" height="6.4" fill="#fafafa" stroke="#dadada" stroke-width="0.4"/><rect x="0.7" y="24.7" width="6.3" height="6.4" fill="#fafafa" stroke="#dadada" stroke-width="0.4"/><rect x="7.45" y="24.7" width="6.3" height="6.4" fill="#fafafa" stroke="#dadada" stroke-width="0.4"/><rect x="14.2" y="24.7" width="6.3" height="6.4" fill="#fafafa" stroke="#dadada" stroke-width="0.4"/><rect x="20.95" y="24.7" width="6.3" height="6.4" fill="#fafafa" stroke="#dadada" stroke-width="0.4"/><rect x="27.7" y="24.7" width="6.3" height="6.4" fill="#fafafa" stroke="#dadada" stroke-width="0.4"/><rect x="34.45" y="24.7" width="6.3" height="6.4" fill="#fafafa" stroke="#dadada" stroke-width="0.4"/><rect x="41.2" y="24.7" width="6.3" height="6.4" fill="#fafafa" stroke="#dadada" stroke-width="0.4"/><rect x="47.95" y="24.7" width="6.3" height="6.4" fill="#fafafa" stroke="#dadada" stroke-width="0.4"/><rect x="54.7" y="24.7" width="6.3" height="6.4" fill="#fafafa" stroke="#dadada" stroke-width="0.4"/><rect x="61.45" y="24.7" width="6.3" height="6.4" fill="#fafafa" stroke="#dadada" stroke-width="0.4"/><rect x="68.2" y="24.7" width="6.3" height="6.4" fill="#fafafa" stroke="#dadada" stroke-width="0.4"/><rect x="74.95" y="24.7" width="6.3" height="6.4" fill="#fafafa" stroke="#dadada" stroke-width="0.4"/><rect x="3.55" y="5.8" width="0.7" height="3.4" fill="#444"/><rect x="9.7" y="7.1" width="1.8" height="0.8" fill="#444"/><rect x="16.05" y="6.5" width="2.6" height="2" fill="#555"/><ellipse cx="23.6" cy="8.5" rx="0.9" ry="0.7" fill="#333"/><rect x="24.4" y="5.7" width="0.45" height="2.8" fill="#333"/><ellipse cx="30.35" cy="8.5" rx="0.9" ry="0.7" fill="#333"/><rect x="31.15" y="5.7" width="0.45" height="2.8" fill="#333"/><ellipse cx="37.1" cy="8.5" rx="0.9" ry="0.7" fill="#333"/><rect x="37.9" y="5.7" width="0.45" height="2.8" fill="#333"/><ellipse cx="43.85" cy="8.5" rx="0.9" ry="0.7" fill="#333"/><rect x="44.65" y="5.7" width="0.45" height="2.8" fill="#333"/><rect x="50.8" y="5.8" width="0.7" height="3.4" fill="#444"/><ellipse cx="57.35" cy="8.5" rx="0.9" ry="0.7" fill="#333"/><rect x="58.15" y="5.7" width="0.45" height="2.8" fill="#333"/><ellipse cx="64.1" cy="8.5" rx="0.9" ry="0.7" fill="#333"/><rect x="64.9" y="5.7" width="0.45" height="2.8" fill="#333"/><ellipse cx="70.85" cy="8.5" rx="0.9" ry="0.7" fill="#333"/><rect x="71.65" y="5.7" width="0.45" height="2.8" fill="#333"/><rect x="77.2" y="7.1" width="1.8" height="0.8" fill="#444"/><ellipse cx="3.35" cy="15.3" rx="0.9" ry="0.7" fill="#333"/><rect x="4.15" y="12.5" width="0.45" height="2.8" fill="#333"/><ellipse cx="10.1" cy="15.3" rx="0.9" ry="0.7" fill="#333"/><rect x="10.9" y="12.5" width="0.45" height="2.8" fill="#333"/><rect x="16.05" y="13.3" width="2.6" height="2" fill="#555"/><rect x="22.8" y="13.3" width="2.6" height="2" fill="#555"/><ellipse cx="30.35" cy="15.3" rx="0.9" ry="0.7" fill="#333"/><rect x="31.15" y="12.5" width="0.45" height="2.8" fill="#333"/><rect x="36.7" y="13.9" width="1.8" height="0.8" fill="#444"/><ellipse cx="43.85" cy="15.3" rx="0.9" ry="0.7" fill="#333"/><rect x="44.65" y="12.5" width="0.45" height="2.8" fill="#333"/><ellipse cx="70.85" cy="15.3" rx="0.9" ry="0.7" fill="#333"/><rect x="71.65" y="12.5" width="0.45" height="2.8" fill="#333"/><rect x="76.8" y="13.3" width="2.6" height="2" fill="#555"/><ellipse cx="3.35" cy="22.1" rx="0.9" ry="0.7" fill="#333"/><rect x="4.15" y="19.3" width="0.45" height="2.8" fill="#333"/><ellipse cx="10.1" cy="22.1" rx="0.9" ry="0.7" fill="#333"/><rect x="10.9" y="19.3" width="0.45" height="2.8" fill="#333"/><ellipse cx="16.85" cy="22.1" rx="0.9" ry="0.7" fill="#333"/><rect x="17.65" y="19.3" width="0.45" height="2.8" fill="#333"/><rect x="23.2" y="20.7" width="1.8" height="0.8" fill="#444"/><ellipse cx="30.35" cy="22.1" rx="0.9" ry="0.7" fill="#333"/><rect x="31.15" y="19.3" width="0.45" height="2.8" fill="#333"/><ellipse cx="37.1" cy="22.1" rx="0.9" ry="0.7" fill="#333"/><rect x="37.9" y="19.3" width="0.45" height="2.8" fill="#333"/><ellipse cx="43.85" cy="22.1" rx="0.9" ry="0.7" fill="#333"/><rect x="44.65" y="19.3" width="0.45" height="2.8" fill="#333"/><ellipse cx="50.6" cy="22.1" rx="0.9" ry="0.7" fill="#333"/><rect x="51.4" y="19.3" width="0.45" height="2.8" fill="#333"/><rect x="56.55" y="20.1" width="2.6" height="2" fill="#555"/><ellipse cx="64.1" cy="22.1" rx="0.9" ry="0.7" fill="#333"/><rect x="64.9" y="19.3" width="0.45" height="2.8" fill="#333"/><rect x="70.45" y="20.7" width="1.8" height="0.8" fill="#444"/><ellipse cx="77.6" cy="22.1" rx="0.9" ry="0.7" fill="#333"/><rect x="78.4" y="19.3" width="0.45" height="2.8" fill="#333"/><ellipse cx="3.35" cy="28.9" rx="0.9" ry="0.7" fill="#333"/><rect x="4.15" y="26.1" width="0.45" height="2.8" fill="#333"/><rect x="9.7" y="27.5" width="1.8" height="0.8" fill="#444"/><rect x="17.05" y="26.2" width="0.7" height="3.4" fill="#444"/><rect x="22.8" y="26.9" width="2.6" height="2" fill="#555"/><rect x="29.95" y="27.5" width="1.8" height="0.8" fill="#444"/><ellipse cx="37.1" cy="28.9" rx="0.9" ry="0.7" fill="#333"/><rect x="37.9" y="26.1" width="0.45" height="2.8" fill="#333"/><ellipse cx="43.85" cy="28.9" rx="0.9" ry="0.7" fill="#333"/><rect x="44.65" y="26.1" width="0.45" height="2.8" fill="#333"/><ellipse cx="50.6" cy="28.9" rx="0.9" ry="0.7" fill="#333"/><rect x="51.4" y="26.1" width="0.45" height="2.8" fill="#333"/><rect x="21.2" y="17.9" width="6.6" height="13.5" fill="#7474e6"/><rect x="23.8" y="19.9" width="1.2" height="3" fill="#222"/><ellipse cx="24.4" cy="27.9" rx="1" ry="0.9" fill="#222"/><rect x="58" y="26.8" width="4.6" height="4.5" fill="#7474e6"/><rect x="66" y="28.4" width="1" height="1.5" fill="#555"/><rect x="72" y="28.4" width="1" height="1.5" fill="#555"/><rect x="77.5" y="28.4" width="1" height="1.5" fill="#555"/></svg>
<div style="left:190px;top:386.5px;width:336px;height:29px;background:#ffffff;"></div>
<div style="left:190px;top:415.4px;width:336px;height:110.4px;background:#dbdbd7;"></div>
<div style="left:189.3px;top:386.5px;width:0.8px;height:139.3px;background:#9a9a9a;"></div>
<div style="left:221.5px;top:389.6px;width:280.3px;height:9.1px;background:#b9b9b9;"></div>
<div style="left:221.5px;top:408.4px;width:280.3px;height:7.2px;background:#e6e6e4;"></div>
<span style="left:205.5px;top:392.3px;font-size:4px;color:#777;font-family:'Liberation Serif',serif">Staff 1</span>
<svg style="position:absolute;left:190px;top:386.5px" width="336" height="140"><line x1="31.5" y1="4.4" x2="311.8" y2="4.4" stroke="#777" stroke-width="0.5"/><line x1="31.5" y1="6.17" x2="311.8" y2="6.17" stroke="#777" stroke-width="0.5"/><line x1="31.5" y1="7.95" x2="311.8" y2="7.95" stroke="#777" stroke-width="0.5"/><line x1="31.5" y1="9.73" x2="311.8" y2="9.73" stroke="#777" stroke-width="0.5"/><line x1="31.5" y1="11.5" x2="311.8" y2="11.5" stroke="#777" stroke-width="0.5"/><text x="32.8" y="11.2" font-size="11" fill="#111">𝄞</text><text x="42.4" y="11.3" font-size="9" fill="#c06050" opacity="0.75" font-family="Liberation Serif">8</text><rect x="41.5" y="3" width="1.4" height="3.5" fill="#111"/><line x1="31.5" y1="22.1" x2="311.8" y2="22.1" stroke="#8c8c8c" stroke-width="0.5"/><line x1="31.5" y1="23.75" x2="311.8" y2="23.75" stroke="#8c8c8c" stroke-width="0.5"/><line x1="31.5" y1="25.4" x2="311.8" y2="25.4" stroke="#8c8c8c" stroke-width="0.5"/><line x1="31.5" y1="27.05" x2="311.8" y2="27.05" stroke="#8c8c8c" stroke-width="0.5"/><line x1="31.5" y1="28.7" x2="311.8" y2="28.7" stroke="#8c8c8c" stroke-width="0.5"/><text x="33.5" y="30.5" font-size="10" fill="#888">𝄢</text><text x="42.4" y="29" font-size="9" fill="#c06050" opacity="0.75" font-family="Liberation Serif">8</text><line x1="31.5" y1="48.6" x2="311.8" y2="48.6" stroke="#8c8c8c" stroke-width="0.5"/><line x1="31.5" y1="50.65" x2="311.8" y2="50.65" stroke="#8c8c8c" stroke-width="0.5"/><line x1="31.5" y1="52.7" x2="311.8" y2="52.7" stroke="#8c8c8c" stroke-width="0.5"/><line x1="31.5" y1="54.75" x2="311.8" y2="54.75" stroke="#8c8c8c" stroke-width="0.5"/><line x1="31.5" y1="56.8" x2="311.8" y2="56.8" stroke="#8c8c8c" stroke-width="0.5"/><text x="32.8" y="56.5" font-size="11" fill="#888">𝄞</text><text x="42.4" y="55.5" font-size="9" fill="#c06050" opacity="0.75" font-family="Liberation Serif">8</text><line x1="31.5" y1="69.3" x2="311.8" y2="69.3" stroke="#8c8c8c" stroke-width="0.5"/><line x1="31.5" y1="71.25" x2="311.8" y2="71.25" stroke="#8c8c8c" stroke-width="0.5"/><line x1="31.5" y1="73.2" x2="311.8" y2="73.2" stroke="#8c8c8c" stroke-width="0.5"/><line x1="31.5" y1="75.15" x2="311.8" y2="75.15" stroke="#8c8c8c" stroke-width="0.5"/><line x1="31.5" y1="77.1" x2="311.8" y2="77.1" stroke="#8c8c8c" stroke-width="0.5"/><text x="32.8" y="76.8" font-size="11" fill="#888">𝄞</text><text x="42.4" y="76.2" font-size="9" fill="#c06050" opacity="0.75" font-family="Liberation Serif">8</text><line x1="31.5" y1="92.1" x2="311.8" y2="92.1" stroke="#8c8c8c" stroke-width="0.5"/><line x1="31.5" y1="93.95" x2="311.8" y2="93.95" stroke="#8c8c8c" stroke-width="0.5"/><line x1="31.5" y1="95.8" x2="311.8" y2="95.8" stroke="#8c8c8c" stroke-width="0.5"/><line x1="31.5" y1="97.65" x2="311.8" y2="97.65" stroke="#8c8c8c" stroke-width="0.5"/><line x1="31.5" y1="99.5" x2="311.8" y2="99.5" stroke="#8c8c8c" stroke-width="0.5"/><text x="32.8" y="99.2" font-size="11" fill="#888">𝄞</text><text x="42.4" y="99" font-size="9" fill="#c06050" opacity="0.75" font-family="Liberation Serif">8</text><line x1="31.5" y1="110.7" x2="311.8" y2="110.7" stroke="#8c8c8c" stroke-width="0.5"/><line x1="31.5" y1="112.55" x2="311.8" y2="112.55" stroke="#8c8c8c" stroke-width="0.5"/><line x1="31.5" y1="114.4" x2="311.8" y2="114.4" stroke="#8c8c8c" stroke-width="0.5"/><line x1="31.5" y1="116.25" x2="311.8" y2="116.25" stroke="#8c8c8c" stroke-width="0.5"/><line x1="31.5" y1="118.1" x2="311.8" y2="118.1" stroke="#8c8c8c" stroke-width="0.5"/><text x="33.5" y="119.1" font-size="10" fill="#888">𝄢</text><text x="42.4" y="117.6" font-size="9" fill="#c06050" opacity="0.75" font-family="Liberation Serif">8</text><line x1="94.5" y1="3.1" x2="94.5" y2="120" stroke="#7a7a7a" stroke-width="0.55"/><line x1="144" y1="3.1" x2="144" y2="120" stroke="#7a7a7a" stroke-width="0.55"/><line x1="190.2" y1="3.1" x2="190.2" y2="120" stroke="#7a7a7a" stroke-width="0.55"/><line x1="231" y1="3.1" x2="231" y2="120" stroke="#7a7a7a" stroke-width="0.55"/><line x1="275.6" y1="3.1" x2="275.6" y2="120" stroke="#7a7a7a" stroke-width="0.55"/><line x1="184.5" y1="-1" x2="184.5" y2="24.5" stroke="#1a1a1a" stroke-width="1.3"/><path d="M29,50.5 Q26.8,54.5 27.6,71.5 Q26.3,83.5 28.5,119.5" stroke="#888" stroke-width="0.5" fill="none"/><line x1="31.5" y1="3.1" x2="31.5" y2="120" stroke="#777" stroke-width="0.6"/><line x1="29.7" y1="11.5" x2="29.7" y2="120" stroke="#8a8a8a" stroke-width="0.6"/><rect x="118.2" y="5.7" width="3.2" height="1.3" fill="#222"/><rect x="166.4" y="5.7" width="3.2" height="1.3" fill="#222"/><rect x="210.3" y="5.7" width="3.2" height="1.3" fill="#222"/><rect x="252.9" y="5.7" width="3.2" height="1.3" fill="#222"/><rect x="278.9" y="5.7" width="3.2" height="1.3" fill="#222"/><line x1="294.2" y1="4.5" x2="294.2" y2="9.5" stroke="#3a3a6a" stroke-width="1.1"/><line x1="304" y1="4.5" x2="304" y2="9.5" stroke="#3a3a6a" stroke-width="1.1"/><line x1="46" y1="7.5" x2="72" y2="7.5" stroke="#999" stroke-width="0.4"/><ellipse cx="71.9" cy="24.5" rx="1.35" ry="1.0" fill="#6a6a6a"/><line x1="73.1" y1="24.5" x2="73.1" y2="18" stroke="#6a6a6a" stroke-width="0.45"/><ellipse cx="100.5" cy="23" rx="1.35" ry="1.0" fill="#6a6a6a"/><line x1="101.7" y1="23" x2="101.7" y2="16.5" stroke="#6a6a6a" stroke-width="0.45"/><ellipse cx="122.7" cy="22.3" rx="1.35" ry="1.0" fill="#6a6a6a"/><line x1="123.9" y1="22.3" x2="123.9" y2="15.8" stroke="#6a6a6a" stroke-width="0.45"/><ellipse cx="133" cy="25.5" rx="1.35" ry="1.0" fill="#6a6a6a"/><line x1="134.2" y1="25.5" x2="134.2" y2="19" stroke="#6a6a6a" stroke-width="0.45"/><ellipse cx="149" cy="23.5" rx="1.35" ry="1.0" fill="#6a6a6a"/><line x1="150.2" y1="23.5" x2="150.2" y2="17" stroke="#6a6a6a" stroke-width="0.45"/><ellipse cx="159" cy="26" rx="1.35" ry="1.0" fill="#6a6a6a"/><line x1="160.2" y1="26" x2="160.2" y2="19.5" stroke="#6a6a6a" stroke-width="0.45"/><ellipse cx="171" cy="24.5" rx="1.35" ry="1.0" fill="#6a6a6a"/><line x1="172.2" y1="24.5" x2="172.2" y2="18" stroke="#6a6a6a" stroke-width="0.45"/><ellipse cx="195" cy="25" rx="1.35" ry="1.0" fill="#6a6a6a"/><line x1="196.2" y1="25" x2="196.2" y2="18.5" stroke="#6a6a6a" stroke-width="0.45"/><ellipse cx="212" cy="26.5" rx="1.35" ry="1.0" fill="#6a6a6a"/><line x1="213.2" y1="26.5" x2="213.2" y2="20" stroke="#6a6a6a" stroke-width="0.45"/><ellipse cx="223" cy="25.5" rx="1.35" ry="1.0" fill="#6a6a6a"/><line x1="224.2" y1="25.5" x2="224.2" y2="19" stroke="#6a6a6a" stroke-width="0.45"/><ellipse cx="281" cy="26.5" rx="1.35" ry="1.0" fill="#6a6a6a"/><line x1="282.2" y1="26.5" x2="282.2" y2="20" stroke="#6a6a6a" stroke-width="0.45"/><path d="M84.9,22.8 L86.3,24.8 L84.9,26.8 L86.1,28.6" stroke="#6a6a6a" stroke-width="0.6" fill="none"/><path d="M303.4,23.5 L304.8,25.5 L303.4,27.5 L304.6,29.3" stroke="#6a6a6a" stroke-width="0.6" fill="none"/><rect x="47.4" y="38.7" width="2" height="1.6" fill="#a6a6a6"/><rect x="68.35" y="38.7" width="4.5" height="1.6" fill="#a6a6a6"/><rect x="98.25" y="38.7" width="4.5" height="1.6" fill="#a6a6a6"/><rect x="119.75" y="38.7" width="4.5" height="1.6" fill="#a6a6a6"/><rect x="130.75" y="38.7" width="4.5" height="1.6" fill="#a6a6a6"/><rect x="146.75" y="38.7" width="4.5" height="1.6" fill="#a6a6a6"/><rect x="167.75" y="38.7" width="4.5" height="1.6" fill="#a6a6a6"/><rect x="192.75" y="38.7" width="4.5" height="1.6" fill="#a6a6a6"/><rect x="209.75" y="38.7" width="4.5" height="1.6" fill="#a6a6a6"/><rect x="233.75" y="38.7" width="4.5" height="1.6" fill="#a6a6a6"/><ellipse cx="71.9" cy="113.5" rx="1.35" ry="1.0" fill="#6a6a6a"/><line x1="73.1" y1="113.5" x2="73.1" y2="107" stroke="#6a6a6a" stroke-width="0.45"/><ellipse cx="100.5" cy="112" rx="1.35" ry="1.0" fill="#6a6a6a"/><line x1="101.7" y1="112" x2="101.7" y2="105.5" stroke="#6a6a6a" stroke-width="0.45"/><ellipse cx="122.7" cy="111.3" rx="1.35" ry="1.0" fill="#6a6a6a"/><line x1="123.9" y1="111.3" x2="123.9" y2="104.8" stroke="#6a6a6a" stroke-width="0.45"/><ellipse cx="133" cy="114.5" rx="1.35" ry="1.0" fill="#6a6a6a"/><line x1="134.2" y1="114.5" x2="134.2" y2="108" stroke="#6a6a6a" stroke-width="0.45"/><ellipse cx="149" cy="112.5" rx="1.35" ry="1.0" fill="#6a6a6a"/><line x1="150.2" y1="112.5" x2="150.2" y2="106" stroke="#6a6a6a" stroke-width="0.45"/><ellipse cx="159" cy="115" rx="1.35" ry="1.0" fill="#6a6a6a"/><line x1="160.2" y1="115" x2="160.2" y2="108.5" stroke="#6a6a6a" stroke-width="0.45"/><ellipse cx="171" cy="113.5" rx="1.35" ry="1.0" fill="#6a6a6a"/><line x1="172.2" y1="113.5" x2="172.2" y2="107" stroke="#6a6a6a" stroke-width="0.45"/><ellipse cx="195" cy="114" rx="1.35" ry="1.0" fill="#6a6a6a"/><line x1="196.2" y1="114" x2="196.2" y2="107.5" stroke="#6a6a6a" stroke-width="0.45"/><ellipse cx="212" cy="115.5" rx="1.35" ry="1.0" fill="#6a6a6a"/><line x1="213.2" y1="115.5" x2="213.2" y2="109" stroke="#6a6a6a" stroke-width="0.45"/><ellipse cx="223" cy="114.5" rx="1.35" ry="1.0" fill="#6a6a6a"/><line x1="224.2" y1="114.5" x2="224.2" y2="108" stroke="#6a6a6a" stroke-width="0.45"/><ellipse cx="281" cy="115.5" rx="1.35" ry="1.0" fill="#6a6a6a"/><line x1="282.2" y1="115.5" x2="282.2" y2="109" stroke="#6a6a6a" stroke-width="0.45"/><path d="M84.9,111.8 L86.3,113.8 L84.9,115.8 L86.1,117.6" stroke="#6a6a6a" stroke-width="0.6" fill="none"/><path d="M303.4,112.5 L304.8,114.5 L303.4,116.5 L304.6,118.3" stroke="#6a6a6a" stroke-width="0.6" fill="none"/><rect x="47.4" y="127.7" width="2" height="1.6" fill="#a6a6a6"/><rect x="68.35" y="127.7" width="4.5" height="1.6" fill="#a6a6a6"/><rect x="98.25" y="127.7" width="4.5" height="1.6" fill="#a6a6a6"/><rect x="119.75" y="127.7" width="4.5" height="1.6" fill="#a6a6a6"/><rect x="130.75" y="127.7" width="4.5" height="1.6" fill="#a6a6a6"/><rect x="146.75" y="127.7" width="4.5" height="1.6" fill="#a6a6a6"/><rect x="167.75" y="127.7" width="4.5" height="1.6" fill="#a6a6a6"/><rect x="192.75" y="127.7" width="4.5" height="1.6" fill="#a6a6a6"/><rect x="209.75" y="127.7" width="4.5" height="1.6" fill="#a6a6a6"/><rect x="233.75" y="127.7" width="4.5" height="1.6" fill="#a6a6a6"/><ellipse cx="71.9" cy="51.5" rx="1.3" ry="0.95" fill="none" stroke="#6a6a6a" stroke-width="0.5"/><line x1="73.1" y1="51.5" x2="73.1" y2="45" stroke="#6a6a6a" stroke-width="0.45"/><ellipse cx="100.5" cy="55.5" rx="1.35" ry="1.0" fill="#6a6a6a"/><line x1="101.7" y1="55.5" x2="101.7" y2="49" stroke="#6a6a6a" stroke-width="0.45"/><ellipse cx="123" cy="50.5" rx="1.35" ry="1.0" fill="#6a6a6a"/><line x1="124.2" y1="50.5" x2="124.2" y2="44" stroke="#6a6a6a" stroke-width="0.45"/><ellipse cx="149" cy="53.5" rx="1.35" ry="1.0" fill="#6a6a6a"/><line x1="150.2" y1="53.5" x2="150.2" y2="47" stroke="#6a6a6a" stroke-width="0.45"/><ellipse cx="171" cy="51.5" rx="1.35" ry="1.0" fill="#6a6a6a"/><line x1="172.2" y1="51.5" x2="172.2" y2="45" stroke="#6a6a6a" stroke-width="0.45"/><ellipse cx="178" cy="54.5" rx="1.35" ry="1.0" fill="#6a6a6a"/><line x1="179.2" y1="54.5" x2="179.2" y2="48" stroke="#6a6a6a" stroke-width="0.45"/><ellipse cx="195" cy="53.5" rx="1.35" ry="1.0" fill="#6a6a6a"/><line x1="196.2" y1="53.5" x2="196.2" y2="47" stroke="#6a6a6a" stroke-width="0.45"/><ellipse cx="205" cy="54.5" rx="1.35" ry="1.0" fill="#6a6a6a"/><line x1="206.2" y1="54.5" x2="206.2" y2="48" stroke="#6a6a6a" stroke-width="0.45"/><ellipse cx="214" cy="52.5" rx="1.35" ry="1.0" fill="#6a6a6a"/><line x1="215.2" y1="52.5" x2="215.2" y2="46" stroke="#6a6a6a" stroke-width="0.45"/><ellipse cx="236" cy="53.5" rx="1.3" ry="0.95" fill="none" stroke="#6a6a6a" stroke-width="0.5"/><line x1="237.2" y1="53.5" x2="237.2" y2="47" stroke="#6a6a6a" stroke-width="0.45"/><ellipse cx="256" cy="51.5" rx="1.35" ry="1.0" fill="#6a6a6a"/><line x1="257.2" y1="51.5" x2="257.2" y2="45" stroke="#6a6a6a" stroke-width="0.45"/><ellipse cx="281" cy="52.5" rx="1.35" ry="1.0" fill="#6a6a6a"/><line x1="282.2" y1="52.5" x2="282.2" y2="46" stroke="#6a6a6a" stroke-width="0.45"/><path d="M111.4,49 L112.8,51 L111.4,53 L112.6,54.8" stroke="#6a6a6a" stroke-width="0.6" fill="none"/><path d="M303.4,50.5 L304.8,52.5 L303.4,54.5 L304.6,56.3" stroke="#6a6a6a" stroke-width="0.6" fill="none"/><line x1="47" y1="56.5" x2="66" y2="57" stroke="#8a8a8a" stroke-width="0.6"/><rect x="47.4" y="62.7" width="2" height="1.6" fill="#a6a6a6"/><rect x="98.5" y="62.7" width="4" height="1.6" fill="#a6a6a6"/><rect x="147" y="62.7" width="4" height="1.6" fill="#a6a6a6"/><rect x="168" y="62.7" width="4" height="1.6" fill="#a6a6a6"/><rect x="176" y="62.7" width="4" height="1.6" fill="#a6a6a6"/><rect x="193" y="62.7" width="4" height="1.6" fill="#a6a6a6"/><rect x="234" y="62.7" width="4" height="1.6" fill="#a6a6a6"/><rect x="278" y="62.7" width="4" height="1.6" fill="#a6a6a6"/><ellipse cx="72" cy="77.5" rx="1.35" ry="1.0" fill="#6a6a6a"/><line x1="73.2" y1="77.5" x2="73.2" y2="71" stroke="#6a6a6a" stroke-width="0.45"/><ellipse cx="78" cy="75.5" rx="1.35" ry="1.0" fill="#6a6a6a"/><line x1="79.2" y1="75.5" x2="79.2" y2="69" stroke="#6a6a6a" stroke-width="0.45"/><ellipse cx="85" cy="76.5" rx="1.35" ry="1.0" fill="#6a6a6a"/><line x1="86.2" y1="76.5" x2="86.2" y2="70" stroke="#6a6a6a" stroke-width="0.45"/><ellipse cx="87" cy="74.5" rx="1.35" ry="1.0" fill="#6a6a6a"/><line x1="88.2" y1="74.5" x2="88.2" y2="68" stroke="#6a6a6a" stroke-width="0.45"/><ellipse cx="101" cy="77.5" rx="1.35" ry="1.0" fill="#6a6a6a"/><line x1="102.2" y1="77.5" x2="102.2" y2="71" stroke="#6a6a6a" stroke-width="0.45"/><ellipse cx="108" cy="79.5" rx="1.35" ry="1.0" fill="#6a6a6a"/><line x1="109.2" y1="79.5" x2="109.2" y2="73" stroke="#6a6a6a" stroke-width="0.45"/><ellipse cx="123" cy="75.5" rx="1.35" ry="1.0" fill="#6a6a6a"/><line x1="124.2" y1="75.5" x2="124.2" y2="69" stroke="#6a6a6a" stroke-width="0.45"/><ellipse cx="149" cy="78.5" rx="1.35" ry="1.0" fill="#6a6a6a"/><line x1="150.2" y1="78.5" x2="150.2" y2="72" stroke="#6a6a6a" stroke-width="0.45"/><ellipse cx="159" cy="80.5" rx="1.35" ry="1.0" fill="#6a6a6a"/><line x1="160.2" y1="80.5" x2="160.2" y2="74" stroke="#6a6a6a" stroke-width="0.45"/><ellipse cx="171" cy="74.5" rx="1.35" ry="1.0" fill="#6a6a6a"/><line x1="172.2" y1="74.5" x2="172.2" y2="68" stroke="#6a6a6a" stroke-width="0.45"/><ellipse cx="180" cy="76.5" rx="1.35" ry="1.0" fill="#6a6a6a"/><line x1="181.2" y1="76.5" x2="181.2" y2="70" stroke="#6a6a6a" stroke-width="0.45"/><ellipse cx="196" cy="76.5" rx="1.35" ry="1.0" fill="#6a6a6a"/><line x1="197.2" y1="76.5" x2="197.2" y2="70" stroke="#6a6a6a" stroke-width="0.45"/><ellipse cx="205" cy="75.5" rx="1.35" ry="1.0" fill="#6a6a6a"/><line x1="206.2" y1="75.5" x2="206.2" y2="69" stroke="#6a6a6a" stroke-width="0.45"/><ellipse cx="214" cy="74.5" rx="1.35" ry="1.0" fill="#6a6a6a"/><line x1="215.2" y1="74.5" x2="215.2" y2="68" stroke="#6a6a6a" stroke-width="0.45"/><ellipse cx="236" cy="75.5" rx="1.35" ry="1.0" fill="#6a6a6a"/><line x1="237.2" y1="75.5" x2="237.2" y2="69" stroke="#6a6a6a" stroke-width="0.45"/><ellipse cx="247" cy="79.5" rx="1.35" ry="1.0" fill="#6a6a6a"/><line x1="248.2" y1="79.5" x2="248.2" y2="73" stroke="#6a6a6a" stroke-width="0.45"/><ellipse cx="264" cy="81.5" rx="1.35" ry="1.0" fill="#6a6a6a"/><line x1="265.2" y1="81.5" x2="265.2" y2="75" stroke="#6a6a6a" stroke-width="0.45"/><ellipse cx="279" cy="81.5" rx="1.35" ry="1.0" fill="#6a6a6a"/><line x1="280.2" y1="81.5" x2="280.2" y2="75" stroke="#6a6a6a" stroke-width="0.45"/><ellipse cx="295" cy="78.5" rx="1.35" ry="1.0" fill="#6a6a6a"/><line x1="296.2" y1="78.5" x2="296.2" y2="72" stroke="#6a6a6a" stroke-width="0.45"/><path d="M303.4,70.5 L304.8,72.5 L303.4,74.5 L304.6,76.3" stroke="#6a6a6a" stroke-width="0.6" fill="none"/><path d="M122,80.5 Q138,82.5 155,81" stroke="#8a8a8a" stroke-width="0.5" fill="none"/><rect x="47.4" y="86.7" width="2" height="1.6" fill="#a6a6a6"/><rect x="68" y="86.7" width="4" height="1.6" fill="#a6a6a6"/><rect x="83" y="86.7" width="4" height="1.6" fill="#a6a6a6"/><rect x="98" y="86.7" width="4" height="1.6" fill="#a6a6a6"/><rect x="120" y="86.7" width="4" height="1.6" fill="#a6a6a6"/><rect x="177" y="86.7" width="4" height="1.6" fill="#a6a6a6"/><rect x="194" y="86.7" width="4" height="1.6" fill="#a6a6a6"/><rect x="203" y="86.7" width="4" height="1.6" fill="#a6a6a6"/><rect x="212" y="86.7" width="4" height="1.6" fill="#a6a6a6"/><rect x="234" y="86.7" width="4" height="1.6" fill="#a6a6a6"/><rect x="278" y="86.7" width="4" height="1.6" fill="#a6a6a6"/><rect x="293" y="86.7" width="4" height="1.6" fill="#a6a6a6"/><rect x="68.4" y="94.4" width="3.2" height="1.3" fill="#7a7a7a"/><rect x="118.4" y="94.4" width="3.2" height="1.3" fill="#7a7a7a"/><rect x="165.4" y="94.4" width="3.2" height="1.3" fill="#7a7a7a"/><rect x="210.4" y="94.4" width="3.2" height="1.3" fill="#7a7a7a"/><rect x="252.4" y="94.4" width="3.2" height="1.3" fill="#7a7a7a"/><rect x="278.4" y="94.4" width="3.2" height="1.3" fill="#7a7a7a"/><path d="M293.4,92.5 L294.8,94.5 L293.4,96.5 L294.6,98.3" stroke="#6a6a6a" stroke-width="0.6" fill="none"/><path d="M303.4,92.5 L304.8,94.5 L303.4,96.5 L304.6,98.3" stroke="#6a6a6a" stroke-width="0.6" fill="none"/><line x1="235" y1="18.3" x2="290" y2="17.2" stroke="#8a8a8a" stroke-width="0.45"/><line x1="235" y1="18.3" x2="290" y2="19.4" stroke="#8a8a8a" stroke-width="0.45"/><line x1="235" y1="44.5" x2="290" y2="43.4" stroke="#8a8a8a" stroke-width="0.45"/><line x1="235" y1="44.5" x2="290" y2="45.6" stroke="#8a8a8a" stroke-width="0.45"/><line x1="235" y1="67.9" x2="295" y2="66.8" stroke="#8a8a8a" stroke-width="0.45"/><line x1="235" y1="67.9" x2="295" y2="69" stroke="#8a8a8a" stroke-width="0.45"/><line x1="235" y1="107.5" x2="290" y2="106.4" stroke="#8a8a8a" stroke-width="0.45"/><line x1="235" y1="107.5" x2="290" y2="108.6" stroke="#8a8a8a" stroke-width="0.45"/><path d="M218,138.5 Q241,134.5 265,138.5" stroke="#999" stroke-width="0.5" fill="none"/></svg>
<span style="left:223px;top:522.5px;font-size:3px;color:#777;">112</span>
<div style="left:502px;top:415.4px;width:24px;height:110.4px;background:#dfdfdb;"></div>
</body></html>
